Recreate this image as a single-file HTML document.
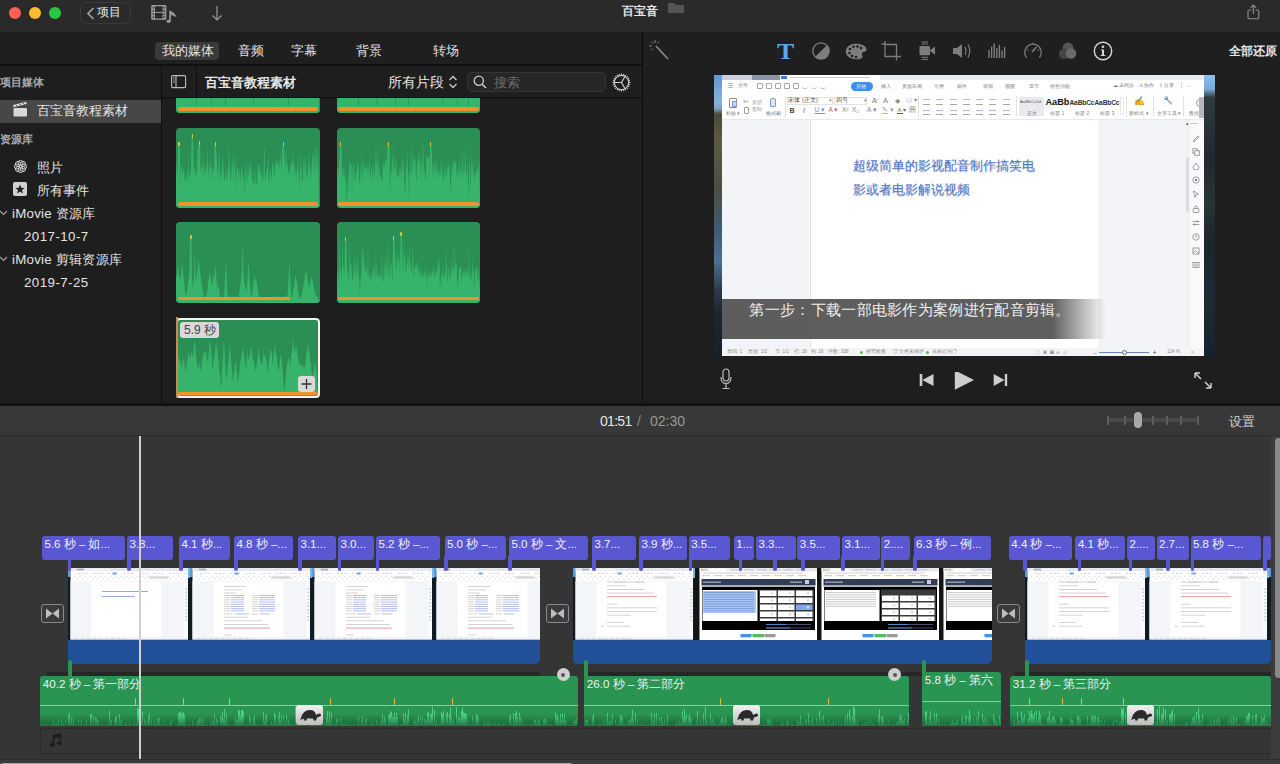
<!DOCTYPE html><html><head><meta charset="utf-8"><style>

*{margin:0;padding:0;box-sizing:border-box}
html,body{width:1280px;height:764px;overflow:hidden;background:#1e1e1e;font-family:"Liberation Sans",sans-serif;color:#ddd}
.ab{position:absolute}
.t{position:absolute;white-space:nowrap;line-height:1}

</style></head><body>
<div class="ab" style="left:0;top:0;width:1280px;height:32px;background:#2a2a2a"></div>
<div class="ab" style="left:9px;top:7px;width:12px;height:12px;border-radius:6px;background:#fe5f57"></div>
<div class="ab" style="left:29px;top:7px;width:12px;height:12px;border-radius:6px;background:#febc2e"></div>
<div class="ab" style="left:49px;top:7px;width:12px;height:12px;border-radius:6px;background:#28c840"></div>
<div class="ab" style="left:80px;top:2px;width:51px;height:22px;border:1px solid #3a3a3a;border-radius:6px"></div>
<svg class="ab" style="left:86px;top:7px" width="10" height="13"><path d="M7.5 1 L2 6.5 L7.5 12" stroke="#aaa" stroke-width="1.6" fill="none"/></svg>
<div class="t" style="left:97px;top:6px;font-size:12px;color:#e6e6e6">项目</div>
<svg class="ab" style="left:151px;top:5px" width="26" height="18" viewBox="0 0 26 18">
<rect x="0.8" y="0.6" width="14" height="13.6" rx="0.8" fill="none" stroke="#9a9a9a" stroke-width="1.2"/>
<rect x="0.8" y="0.6" width="3.2" height="13.6" fill="#9a9a9a"/><rect x="11.6" y="0.6" width="3.2" height="13.6" fill="#9a9a9a"/>
<g fill="#2a2a2a"><rect x="1.7" y="2" width="1.4" height="1.4"/><rect x="1.7" y="5.2" width="1.4" height="1.4"/><rect x="1.7" y="8.4" width="1.4" height="1.4"/><rect x="1.7" y="11.4" width="1.4" height="1.4"/>
<rect x="12.5" y="2" width="1.4" height="1.4"/><rect x="12.5" y="5.2" width="1.4" height="1.4"/><rect x="12.5" y="8.4" width="1.4" height="1.4"/><rect x="12.5" y="11.4" width="1.4" height="1.4"/></g>
<line x1="4" y1="7.4" x2="11.6" y2="7.4" stroke="#9a9a9a" stroke-width="1"/>
<path d="M19 16 V6.5 Q22.5 7.5 24 10.5 Q22 9.5 20.2 9.6" stroke="#9a9a9a" stroke-width="1.5" fill="#9a9a9a"/><ellipse cx="17.6" cy="16.3" rx="2.1" ry="1.6" fill="#9a9a9a"/>
</svg>
<svg class="ab" style="left:211px;top:5px" width="12" height="17"><path d="M6 1 V15 M1.5 10.5 L6 15 L10.5 10.5" stroke="#999" stroke-width="1.2" fill="none"/></svg>
<div class="t" style="left:622px;top:5px;font-size:12px;color:#e8e8e8;font-weight:bold">百宝音</div>
<svg class="ab" style="left:668px;top:2px" width="18" height="12"><path d="M0 1 H6 L8 3 H16 V11 H0Z" fill="#555"/></svg>
<svg class="ab" style="left:1246.5px;top:4px" width="14" height="16"><path d="M6.4 1.2 V10 M3.6 3.8 L6.4 1 L9.2 3.8" stroke="#8e8e8e" stroke-width="1.1" fill="none"/><path d="M4.2 6 H2.4 Q1 6 1 7.4 V13.4 Q1 14.8 2.4 14.8 H10.4 Q11.8 14.8 11.8 13.4 V7.4 Q11.8 6 10.4 6 H8.6" stroke="#8e8e8e" stroke-width="1.1" fill="none"/></svg>
<div class="ab" style="left:0;top:32px;width:1280px;height:34px;background:#1f1f1f"></div>
<div class="ab" style="left:155px;top:42px;width:64px;height:18px;border-radius:4px;background:#3a3a3a"></div>
<div class="t" style="left:162px;top:45px;font-size:12.5px;color:#e0e0e0">我的媒体</div>
<div class="t" style="left:238px;top:45px;font-size:12.5px;color:#e0e0e0">音频</div>
<div class="t" style="left:291px;top:45px;font-size:12.5px;color:#e0e0e0">字幕</div>
<div class="t" style="left:356px;top:45px;font-size:12.5px;color:#e0e0e0">背景</div>
<div class="t" style="left:433px;top:45px;font-size:12.5px;color:#e0e0e0">转场</div>
<div class="ab" style="left:0;top:64px;width:642px;height:2px;background:#111"></div>
<div class="ab" style="left:642px;top:32px;width:1px;height:372px;background:#0c0c0c"></div>
<svg class="ab" style="left:646px;top:38px" width="60" height="24" viewBox="0 0 60 24">
<line x1="10" y1="8" x2="22" y2="21" stroke="#888" stroke-width="1.8"/>
<g stroke="#888" stroke-width="1"><line x1="9" y1="2" x2="9" y2="5"/><line x1="3" y1="8" x2="6" y2="8"/><line x1="5" y1="3.5" x2="7" y2="5.5"/><line x1="13" y1="3.5" x2="11" y2="5.5"/><line x1="5" y1="12.5" x2="7" y2="10.5"/></g>
</svg>
<div class="t" style="left:777px;top:39.5px;font-size:23px;font-family:'Liberation Serif',serif;color:#5aa9f0;font-weight:bold;transform:scaleX(1.12);transform-origin:left">T</div>
<svg class="ab" style="left:810px;top:40px" width="22" height="22"><circle cx="11" cy="11" r="8.2" stroke="#7d7d7d" stroke-width="1.3" fill="none"/><path d="M16.8 5.2 A8.2 8.2 0 0 1 5.2 16.8 Z" fill="#7d7d7d"/></svg>
<svg class="ab" style="left:845px;top:43px" width="23" height="17" viewBox="0 0 23 17"><path d="M11 0.8 C17 0.8 22 3.5 21.5 7 C21 9 18 8.5 17 10 C16 12 19 13 17 15 C15 16.5 12 16.5 9 16 C3 15 0.5 11.5 0.8 8 C1 3.5 6 0.8 11 0.8Z" fill="#7d7d7d"/>
<g fill="#1f1f1f"><circle cx="5" cy="6" r="1.3"/><circle cx="8.5" cy="3.8" r="1.3"/><circle cx="12.5" cy="3.5" r="1.3"/><circle cx="16" cy="5" r="1.3"/><circle cx="4.5" cy="10" r="1.3"/><circle cx="7" cy="13" r="1.3"/><circle cx="11" cy="14" r="1.3"/></g></svg>
<svg class="ab" style="left:881px;top:41px" width="21" height="20"><path d="M0.5 3 H4 M4 0 V15.5 H17 M4 3.5 H15.5 V19.5 M15.5 15.5 H20" stroke="#7d7d7d" stroke-width="1.3" fill="none"/></svg>
<svg class="ab" style="left:918px;top:40px" width="18" height="21"><rect x="1.5" y="6" width="10.5" height="9.3" rx="1.2" fill="#7d7d7d"/><path d="M11.5 10.6 L17 6.5 V14.7 Z" fill="#7d7d7d"/><g stroke="#7d7d7d" stroke-width="1"><line x1="3.5" y1="2" x2="10" y2="2"/><line x1="3.5" y1="4" x2="10" y2="4"/><line x1="3.5" y1="17.3" x2="10" y2="17.3"/><line x1="3.5" y1="19.4" x2="10" y2="19.4"/></g></svg>
<svg class="ab" style="left:952px;top:43px" width="20" height="16"><path d="M1 5 H5 L10 1 V15 L5 11 H1Z" fill="#7d7d7d"/><path d="M13 4 Q15 8 13 12 M16 1.5 Q19.5 8 16 14.5" stroke="#7d7d7d" stroke-width="1.2" fill="none"/></svg>
<svg class="ab" style="left:988px;top:43px" width="18" height="15"><g stroke="#7d7d7d" stroke-width="1.4"><line x1="1.0" y1="7" x2="1.0" y2="15"/><line x1="3.6" y1="3.5" x2="3.6" y2="15"/><line x1="6.2" y1="0.5" x2="6.2" y2="15"/><line x1="8.8" y1="5" x2="8.8" y2="15"/><line x1="11.4" y1="2" x2="11.4" y2="15"/><line x1="14.0" y1="7.5" x2="14.0" y2="15"/><line x1="16.6" y1="4" x2="16.6" y2="15"/></g></svg>
<svg class="ab" style="left:1023px;top:41px" width="20" height="18"><path d="M3.5 16.5 A8.3 8.3 0 1 1 16.5 16.5" stroke="#7d7d7d" stroke-width="1.3" fill="none"/><line x1="9" y1="11" x2="13.5" y2="6" stroke="#7d7d7d" stroke-width="1.6"/><g stroke="#7d7d7d" stroke-width="1"><line x1="10" y1="1.5" x2="10" y2="3.5"/><line x1="3.5" y1="9" x2="5.5" y2="9"/><line x1="14.5" y1="9" x2="16.5" y2="9"/></g></svg>
<svg class="ab" style="left:1058px;top:42px" width="20" height="18"><circle cx="10" cy="5.8" r="5.3" fill="#575757"/><circle cx="6.2" cy="11.8" r="5.3" fill="#444"/><circle cx="13" cy="11.5" r="5.3" fill="#6a6a6a"/></svg>
<svg class="ab" style="left:1093px;top:41px" width="20" height="20"><circle cx="10" cy="10" r="8.7" stroke="#d8d8d8" stroke-width="1.4" fill="none"/><circle cx="10" cy="5.7" r="1.3" fill="#d8d8d8"/><path d="M8 8.5 H11 V14 H12.3 V15 H7.7 V14 H9 V9.5 H8Z" fill="#d8d8d8"/></svg>
<div class="t" style="left:1229px;top:45.5px;font-size:11.5px;color:#e8e8e8;font-weight:bold">全部还原</div>
<div class="ab" style="left:161px;top:66px;width:1px;height:338px;background:#0e0e0e"></div>
<div class="t" style="left:0px;top:77px;font-size:11.3px;color:#a8a8a8;font-weight:bold">项目媒体</div>
<div class="ab" style="left:0;top:100px;width:161px;height:23px;background:#474747"></div>
<svg class="ab" style="left:13px;top:102px" width="15" height="15"><rect x="0.5" y="6" width="13.5" height="8.5" rx="1.2" fill="#d8d8d8"/><path d="M0.7 5.3 L13.8 2 L13 -0.2 L0 3Z" fill="#d8d8d8"/><g stroke="#474747" stroke-width="1"><line x1="3" y1="2.8" x2="4.5" y2="4.5"/><line x1="6.5" y1="1.9" x2="8" y2="3.6"/><line x1="10" y1="1" x2="11.5" y2="2.7"/></g></svg>
<div class="t" style="left:37px;top:104px;font-size:13.3px;color:#e4e4e4">百宝音教程素材</div>
<div class="t" style="left:0px;top:133.5px;font-size:11.3px;color:#a8a8a8;font-weight:bold">资源库</div>
<svg class="ab" style="left:13px;top:159px" width="15" height="15"><g fill="none" stroke="#d0d0d0" stroke-width="1"><ellipse cx="11.10" cy="7.50" rx="2.5" ry="2.5"/><ellipse cx="10.05" cy="10.05" rx="2.5" ry="2.5"/><ellipse cx="7.50" cy="11.10" rx="2.5" ry="2.5"/><ellipse cx="4.95" cy="10.05" rx="2.5" ry="2.5"/><ellipse cx="3.90" cy="7.50" rx="2.5" ry="2.5"/><ellipse cx="4.95" cy="4.95" rx="2.5" ry="2.5"/><ellipse cx="7.50" cy="3.90" rx="2.5" ry="2.5"/><ellipse cx="10.05" cy="4.95" rx="2.5" ry="2.5"/></g></svg>
<div class="t" style="left:37px;top:161px;font-size:13.3px;color:#e4e4e4">照片</div>
<svg class="ab" style="left:13px;top:182px" width="15" height="15"><rect x="0" y="0" width="14" height="14" rx="2" fill="#d0d0d0"/><path d="M7 2.5 L8.3 5.8 L11.8 5.9 L9 8 L10 11.5 L7 9.5 L4 11.5 L5 8 L2.2 5.9 L5.7 5.8Z" fill="#1e1e1e"/></svg>
<div class="t" style="left:37px;top:184px;font-size:13.3px;color:#e4e4e4">所有事件</div>
<svg class="ab" style="left:-1.5px;top:209px" width="9" height="8"><path d="M1 2 L4.5 5.5 L8 2" stroke="#aaa" stroke-width="1.1" fill="none"/></svg>
<div class="t" style="left:12px;top:207px;font-size:13.3px;color:#e4e4e4;letter-spacing:0.25px">iMovie 资源库</div>
<div class="t" style="left:24px;top:230px;font-size:13.3px;color:#e4e4e4;letter-spacing:0.45px">2017-10-7</div>
<svg class="ab" style="left:-1.5px;top:255px" width="9" height="8"><path d="M1 2 L4.5 5.5 L8 2" stroke="#aaa" stroke-width="1.1" fill="none"/></svg>
<div class="t" style="left:12px;top:253px;font-size:13.3px;color:#e4e4e4;letter-spacing:0.25px">iMovie 剪辑资源库</div>
<div class="t" style="left:24px;top:276px;font-size:13.3px;color:#e4e4e4;letter-spacing:0.45px">2019-7-25</div>
<div class="ab" style="left:162px;top:97px;width:480px;height:1px;background:#0e0e0e"></div>
<div class="ab" style="left:196px;top:66px;width:1px;height:31px;background:#0e0e0e"></div>
<svg class="ab" style="left:171px;top:75px" width="16" height="14"><rect x="0.6" y="0.6" width="14" height="12" rx="1" fill="none" stroke="#bbb" stroke-width="1.1"/><line x1="5" y1="0.6" x2="5" y2="12.6" stroke="#bbb" stroke-width="1.1"/><g stroke="#bbb" stroke-width="0.8"><line x1="1.8" y1="3" x2="4" y2="3"/><line x1="1.8" y1="5" x2="4" y2="5"/><line x1="1.8" y1="7" x2="4" y2="7"/></g></svg>
<div class="t" style="left:205px;top:76px;font-size:13px;color:#e6e6e6;font-weight:bold">百宝音教程素材</div>
<div class="t" style="left:388px;top:76px;font-size:13.5px;color:#e6e6e6">所有片段</div>
<svg class="ab" style="left:448px;top:75px" width="10" height="14"><path d="M1.5 5 L5 1.5 L8.5 5 M1.5 9 L5 12.5 L8.5 9" stroke="#ccc" stroke-width="1.3" fill="none"/></svg>
<div class="ab" style="left:467px;top:72px;width:139px;height:20px;border-radius:5px;background:#262626;border:1px solid #353535"></div>
<svg class="ab" style="left:473px;top:75px" width="14" height="14"><circle cx="5.8" cy="5.8" r="4.6" stroke="#ccc" stroke-width="1.3" fill="none"/><line x1="9.2" y1="9.2" x2="13" y2="13" stroke="#ccc" stroke-width="1.5"/></svg>
<div class="t" style="left:494px;top:76px;font-size:13px;color:#6e6e6e">搜索</div>
<svg class="ab" style="left:612px;top:73px" width="19" height="19" viewBox="0 0 19 19"><circle cx="9.5" cy="9.5" r="7.2" stroke="#ccc" stroke-width="1.2" fill="none"/><line x1="16.70" y1="9.50" x2="18.50" y2="9.50" stroke="#ccc" stroke-width="1"/><line x1="16.45" y1="11.36" x2="18.19" y2="11.83" stroke="#ccc" stroke-width="1"/><line x1="15.74" y1="13.10" x2="17.29" y2="14.00" stroke="#ccc" stroke-width="1"/><line x1="14.59" y1="14.59" x2="15.86" y2="15.86" stroke="#ccc" stroke-width="1"/><line x1="13.10" y1="15.74" x2="14.00" y2="17.29" stroke="#ccc" stroke-width="1"/><line x1="11.36" y1="16.45" x2="11.83" y2="18.19" stroke="#ccc" stroke-width="1"/><line x1="9.50" y1="16.70" x2="9.50" y2="18.50" stroke="#ccc" stroke-width="1"/><line x1="7.64" y1="16.45" x2="7.17" y2="18.19" stroke="#ccc" stroke-width="1"/><line x1="5.90" y1="15.74" x2="5.00" y2="17.29" stroke="#ccc" stroke-width="1"/><line x1="4.41" y1="14.59" x2="3.14" y2="15.86" stroke="#ccc" stroke-width="1"/><line x1="3.26" y1="13.10" x2="1.71" y2="14.00" stroke="#ccc" stroke-width="1"/><line x1="2.55" y1="11.36" x2="0.81" y2="11.83" stroke="#ccc" stroke-width="1"/><line x1="2.30" y1="9.50" x2="0.50" y2="9.50" stroke="#ccc" stroke-width="1"/><line x1="2.55" y1="7.64" x2="0.81" y2="7.17" stroke="#ccc" stroke-width="1"/><line x1="3.26" y1="5.90" x2="1.71" y2="5.00" stroke="#ccc" stroke-width="1"/><line x1="4.41" y1="4.41" x2="3.14" y2="3.14" stroke="#ccc" stroke-width="1"/><line x1="5.90" y1="3.26" x2="5.00" y2="1.71" stroke="#ccc" stroke-width="1"/><line x1="7.64" y1="2.55" x2="7.17" y2="0.81" stroke="#ccc" stroke-width="1"/><line x1="9.50" y1="2.30" x2="9.50" y2="0.50" stroke="#ccc" stroke-width="1"/><line x1="11.36" y1="2.55" x2="11.83" y2="0.81" stroke="#ccc" stroke-width="1"/><line x1="13.10" y1="3.26" x2="14.00" y2="1.71" stroke="#ccc" stroke-width="1"/><line x1="14.59" y1="4.41" x2="15.86" y2="3.14" stroke="#ccc" stroke-width="1"/><line x1="15.74" y1="5.90" x2="17.29" y2="5.00" stroke="#ccc" stroke-width="1"/><line x1="16.45" y1="7.64" x2="18.19" y2="7.17" stroke="#ccc" stroke-width="1"/><path d="M9.5 9.5 L2.5 9.5 M9.5 9.5 L13 3.5 M9.5 9.5 L13 15.5" stroke="#ccc" stroke-width="1.2"/></svg>
<div class="ab" style="left:162px;top:98px;width:480px;height:305px;overflow:hidden">
<div class="ab" style="left:14.1px;top:-65px;width:143.6px;height:80.4px;border-radius:4px;background:#2b8f55;overflow:hidden"><svg class="ab" style="left:0;top:8px" width="143.6" height="70.4"><path d="M0 70.4 L0.0 24.2 L0.5 32.0 L1.0 37.4 L1.5 19.4 L2.0 24.5 L2.5 20.9 L3.0 20.1 L3.5 19.4 L4.0 43.2 L4.5 18.7 L5.0 20.2 L5.5 5.8 L6.0 20.8 L6.5 32.0 L7.0 37.5 L7.5 31.4 L8.0 23.3 L8.5 38.2 L9.0 43.4 L9.5 30.1 L10.0 17.7 L10.5 32.8 L11.0 29.3 L11.5 41.3 L12.0 56.6 L12.5 18.3 L13.0 16.9 L13.5 23.9 L14.0 18.5 L14.5 15.1 L15.0 24.3 L15.5 58.8 L16.0 24.1 L16.5 64.9 L17.0 33.5 L17.5 40.2 L18.0 28.1 L18.5 6.8 L19.0 27.7 L19.5 14.8 L20.0 65.0 L20.5 8.0 L21.0 36.9 L21.5 33.7 L22.0 53.0 L22.5 34.1 L23.0 15.7 L23.5 5.5 L24.0 32.7 L24.5 29.2 L25.0 30.4 L25.5 33.5 L26.0 34.8 L26.5 20.0 L27.0 35.8 L27.5 32.6 L28.0 13.8 L28.5 20.9 L29.0 10.1 L29.5 36.8 L30.0 16.9 L30.5 32.1 L31.0 8.5 L31.5 40.4 L32.0 28.0 L32.5 29.0 L33.0 19.2 L33.5 38.2 L34.0 41.3 L34.5 29.8 L35.0 36.5 L35.5 18.0 L36.0 41.2 L36.5 35.4 L37.0 18.4 L37.5 37.3 L38.0 60.2 L38.5 34.1 L39.0 6.1 L39.5 16.0 L40.0 43.2 L40.5 23.2 L41.0 22.6 L41.5 36.7 L42.0 39.5 L42.5 20.5 L43.0 42.3 L43.5 33.5 L44.0 33.4 L44.5 42.0 L45.0 41.2 L45.5 54.2 L46.0 16.6 L46.5 28.7 L47.0 34.5 L47.5 13.4 L48.0 12.1 L48.5 41.8 L49.0 44.9 L49.5 31.3 L50.0 23.9 L50.5 14.8 L51.0 31.3 L51.5 19.1 L52.0 30.7 L52.5 33.3 L53.0 18.1 L53.5 41.0 L54.0 42.2 L54.5 41.4 L55.0 19.0 L55.5 34.9 L56.0 24.1 L56.5 37.9 L57.0 15.0 L57.5 40.1 L58.0 17.4 L58.5 10.8 L59.0 42.1 L59.5 43.6 L60.0 39.3 L60.5 13.0 L61.0 27.0 L61.5 16.4 L62.0 18.3 L62.5 26.1 L63.0 27.1 L63.5 23.9 L64.0 8.4 L64.5 3.2 L65.0 33.1 L65.5 41.1 L66.0 34.4 L66.5 43.3 L67.0 17.1 L67.5 39.3 L68.0 24.8 L68.5 30.5 L69.0 27.2 L69.5 30.3 L70.0 24.0 L70.5 27.8 L71.0 57.7 L71.5 54.2 L72.0 16.8 L72.5 19.5 L73.0 38.4 L73.5 20.5 L74.0 2.7 L74.5 15.0 L75.0 25.1 L75.5 18.4 L76.0 21.4 L76.5 40.7 L77.0 14.6 L77.5 41.1 L78.0 42.9 L78.5 42.7 L79.0 9.3 L79.5 42.4 L80.0 12.9 L80.5 16.9 L81.0 24.6 L81.5 45.7 L82.0 29.1 L82.5 44.0 L83.0 42.6 L83.5 32.9 L84.0 17.3 L84.5 59.3 L85.0 21.3 L85.5 37.3 L86.0 37.5 L86.5 16.8 L87.0 35.7 L87.5 43.1 L88.0 44.5 L88.5 11.9 L89.0 26.6 L89.5 39.6 L90.0 24.2 L90.5 27.1 L91.0 35.6 L91.5 40.0 L92.0 42.2 L92.5 31.9 L93.0 27.0 L93.5 39.5 L94.0 32.3 L94.5 33.9 L95.0 40.1 L95.5 54.6 L96.0 40.8 L96.5 64.4 L97.0 27.5 L97.5 47.0 L98.0 39.1 L98.5 24.2 L99.0 41.1 L99.5 32.0 L100.0 32.1 L100.5 27.2 L101.0 31.8 L101.5 37.9 L102.0 31.2 L102.5 38.0 L103.0 40.1 L103.5 41.5 L104.0 14.2 L104.5 49.1 L105.0 28.5 L105.5 23.4 L106.0 23.9 L106.5 30.3 L107.0 61.1 L107.5 44.6 L108.0 36.7 L108.5 54.2 L109.0 26.7 L109.5 36.8 L110.0 22.6 L110.5 38.6 L111.0 10.0 L111.5 34.8 L112.0 36.8 L112.5 39.9 L113.0 35.4 L113.5 22.9 L114.0 34.7 L114.5 18.6 L115.0 32.4 L115.5 30.9 L116.0 24.9 L116.5 46.6 L117.0 40.3 L117.5 15.3 L118.0 36.2 L118.5 33.2 L119.0 29.2 L119.5 3.7 L120.0 39.7 L120.5 31.3 L121.0 66.8 L121.5 40.2 L122.0 48.5 L122.5 21.0 L123.0 46.9 L123.5 41.1 L124.0 41.9 L124.5 42.2 L125.0 35.9 L125.5 47.0 L126.0 32.9 L126.5 33.1 L127.0 37.8 L127.5 56.9 L128.0 34.6 L128.5 45.1 L129.0 38.3 L129.5 35.7 L130.0 31.3 L130.5 23.6 L131.0 27.3 L131.5 32.4 L132.0 36.3 L132.5 33.2 L133.0 41.7 L133.5 55.4 L134.0 41.2 L134.5 45.5 L135.0 38.5 L135.5 42.9 L136.0 36.3 L136.5 30.9 L137.0 49.8 L137.5 41.5 L138.0 33.0 L138.5 41.6 L139.0 30.5 L139.5 24.2 L140.0 24.7 L140.5 39.1 L141.0 39.5 L141.5 42.8 L142.0 41.0 L142.5 37.9 L143 70.4 Z" fill="#36b46c"/></svg><div class="ab" style="left:0;top:77.4px;width:143.6px;height:3px;background:#36b46c"></div><div class="ab" style="left:1.5px;top:74.4px;width:140.6px;height:3.3px;border-radius:2px;background:#f3912c"></div></div>
<div class="ab" style="left:174.6px;top:-65px;width:143.6px;height:80.4px;border-radius:4px;background:#2b8f55;overflow:hidden"><svg class="ab" style="left:0;top:8px" width="143.6" height="70.4"><path d="M0 70.4 L0.0 23.9 L0.5 34.3 L1.0 67.8 L1.5 34.9 L2.0 35.7 L2.5 22.9 L3.0 48.5 L3.5 38.2 L4.0 47.8 L4.5 35.5 L5.0 43.4 L5.5 48.8 L6.0 32.8 L6.5 63.1 L7.0 28.9 L7.5 25.9 L8.0 33.0 L8.5 34.3 L9.0 42.4 L9.5 44.4 L10.0 30.7 L10.5 35.2 L11.0 38.2 L11.5 48.3 L12.0 32.9 L12.5 36.2 L13.0 34.5 L13.5 35.9 L14.0 37.1 L14.5 6.6 L15.0 24.7 L15.5 33.8 L16.0 46.6 L16.5 42.5 L17.0 38.2 L17.5 30.8 L18.0 47.3 L18.5 32.9 L19.0 26.3 L19.5 25.9 L20.0 7.2 L20.5 46.7 L21.0 48.0 L21.5 45.4 L22.0 37.7 L22.5 48.8 L23.0 54.4 L23.5 44.2 L24.0 19.8 L24.5 44.4 L25.0 33.7 L25.5 25.4 L26.0 30.4 L26.5 39.1 L27.0 40.7 L27.5 39.7 L28.0 23.1 L28.5 4.5 L29.0 28.0 L29.5 44.6 L30.0 29.4 L30.5 39.3 L31.0 36.6 L31.5 31.4 L32.0 40.4 L32.5 47.8 L33.0 22.2 L33.5 43.2 L34.0 23.0 L34.5 28.6 L35.0 40.1 L35.5 42.8 L36.0 27.2 L36.5 37.1 L37.0 23.8 L37.5 59.8 L38.0 4.5 L38.5 23.8 L39.0 24.8 L39.5 64.2 L40.0 29.7 L40.5 38.3 L41.0 45.5 L41.5 43.2 L42.0 40.5 L42.5 44.1 L43.0 54.2 L43.5 21.4 L44.0 41.5 L44.5 22.5 L45.0 40.1 L45.5 3.8 L46.0 65.0 L46.5 19.7 L47.0 28.1 L47.5 38.2 L48.0 39.8 L48.5 29.6 L49.0 35.8 L49.5 38.3 L50.0 37.9 L50.5 29.7 L51.0 46.4 L51.5 18.6 L52.0 39.3 L52.5 23.3 L53.0 3.0 L53.5 26.7 L54.0 60.3 L54.5 38.3 L55.0 13.8 L55.5 23.5 L56.0 24.1 L56.5 34.2 L57.0 26.7 L57.5 19.6 L58.0 31.5 L58.5 35.8 L59.0 46.7 L59.5 13.4 L60.0 44.7 L60.5 36.5 L61.0 10.3 L61.5 29.2 L62.0 26.4 L62.5 33.5 L63.0 31.5 L63.5 38.6 L64.0 45.3 L64.5 42.1 L65.0 36.9 L65.5 34.3 L66.0 26.9 L66.5 14.3 L67.0 37.3 L67.5 5.9 L68.0 33.7 L68.5 2.3 L69.0 24.9 L69.5 56.3 L70.0 21.8 L70.5 13.3 L71.0 17.6 L71.5 54.2 L72.0 39.7 L72.5 39.9 L73.0 10.1 L73.5 43.5 L74.0 17.1 L74.5 27.1 L75.0 36.2 L75.5 17.5 L76.0 27.7 L76.5 24.4 L77.0 40.1 L77.5 20.3 L78.0 18.5 L78.5 28.0 L79.0 28.4 L79.5 44.3 L80.0 34.7 L80.5 21.9 L81.0 31.4 L81.5 35.7 L82.0 17.0 L82.5 27.8 L83.0 18.6 L83.5 38.0 L84.0 7.4 L84.5 30.4 L85.0 19.5 L85.5 26.7 L86.0 21.6 L86.5 22.5 L87.0 17.1 L87.5 16.0 L88.0 34.7 L88.5 25.0 L89.0 27.0 L89.5 27.3 L90.0 32.5 L90.5 28.9 L91.0 31.7 L91.5 37.6 L92.0 3.6 L92.5 31.6 L93.0 37.7 L93.5 16.0 L94.0 35.4 L94.5 17.9 L95.0 36.8 L95.5 3.0 L96.0 33.0 L96.5 17.0 L97.0 37.6 L97.5 12.9 L98.0 34.4 L98.5 39.2 L99.0 19.7 L99.5 20.1 L100.0 31.5 L100.5 6.8 L101.0 5.1 L101.5 12.3 L102.0 57.6 L102.5 32.0 L103.0 39.6 L103.5 29.6 L104.0 22.4 L104.5 16.0 L105.0 20.9 L105.5 34.0 L106.0 32.5 L106.5 39.8 L107.0 40.9 L107.5 61.1 L108.0 14.3 L108.5 43.6 L109.0 6.9 L109.5 24.0 L110.0 32.8 L110.5 23.6 L111.0 15.7 L111.5 26.4 L112.0 43.2 L112.5 39.1 L113.0 25.0 L113.5 22.5 L114.0 15.4 L114.5 17.8 L115.0 42.6 L115.5 34.1 L116.0 30.4 L116.5 35.3 L117.0 45.4 L117.5 67.8 L118.0 26.0 L118.5 25.4 L119.0 38.3 L119.5 31.7 L120.0 25.9 L120.5 44.6 L121.0 20.1 L121.5 27.1 L122.0 22.1 L122.5 36.4 L123.0 38.0 L123.5 26.4 L124.0 40.7 L124.5 29.3 L125.0 45.0 L125.5 2.5 L126.0 25.5 L126.5 26.6 L127.0 60.2 L127.5 20.1 L128.0 26.3 L128.5 27.9 L129.0 18.3 L129.5 43.0 L130.0 21.3 L130.5 17.3 L131.0 64.2 L131.5 17.2 L132.0 27.6 L132.5 45.2 L133.0 23.5 L133.5 25.9 L134.0 30.4 L134.5 13.5 L135.0 17.0 L135.5 37.5 L136.0 26.7 L136.5 15.0 L137.0 42.3 L137.5 37.5 L138.0 63.6 L138.5 18.3 L139.0 24.1 L139.5 25.1 L140.0 29.6 L140.5 33.5 L141.0 25.1 L141.5 23.2 L142.0 24.9 L142.5 13.0 L143 70.4 Z" fill="#36b46c"/></svg><div class="ab" style="left:0;top:77.4px;width:143.6px;height:3px;background:#36b46c"></div><div class="ab" style="left:1.5px;top:74.4px;width:140.6px;height:3.3px;border-radius:2px;background:#f3912c"></div></div>
<div class="ab" style="left:14.1px;top:30px;width:143.6px;height:80.4px;border-radius:4px;background:#2b8f55;overflow:hidden"><svg class="ab" style="left:0;top:8px" width="143.6" height="70.4"><path d="M0 70.4 L0.0 34.5 L0.5 24.4 L1.0 42.5 L1.5 40.3 L2.0 10.0 L2.5 10.0 L3.0 10.0 L3.5 10.0 L4.0 15.1 L4.5 53.7 L5.0 35.3 L5.5 30.3 L6.0 30.5 L6.5 41.4 L7.0 35.0 L7.5 33.6 L8.0 33.6 L8.5 45.5 L9.0 44.9 L9.5 36.8 L10.0 41.6 L10.5 46.3 L11.0 33.7 L11.5 37.2 L12.0 49.4 L12.5 14.6 L13.0 39.8 L13.5 43.2 L14.0 35.0 L14.5 37.0 L15.0 39.0 L15.5 2.0 L16.0 2.0 L16.5 2.0 L17.0 2.0 L17.5 37.9 L18.0 37.6 L18.5 27.0 L19.0 33.5 L19.5 44.6 L20.0 34.1 L20.5 37.4 L21.0 37.4 L21.5 3.8 L22.0 21.8 L22.5 9.0 L23.0 9.0 L23.5 9.0 L24.0 9.0 L24.5 35.8 L25.0 33.8 L25.5 32.4 L26.0 30.8 L26.5 32.1 L27.0 12.6 L27.5 47.0 L28.0 28.3 L28.5 30.7 L29.0 42.0 L29.5 30.3 L30.0 36.9 L30.5 30.1 L31.0 28.4 L31.5 5.0 L32.0 47.3 L32.5 27.9 L33.0 43.4 L33.5 28.4 L34.0 30.5 L34.5 35.7 L35.0 19.1 L35.5 33.4 L36.0 27.5 L36.5 47.2 L37.0 34.5 L37.5 33.9 L38.0 34.7 L38.5 10.0 L39.0 10.0 L39.5 10.0 L40.0 10.0 L40.5 21.1 L41.0 24.5 L41.5 34.5 L42.0 43.3 L42.5 30.7 L43.0 24.8 L43.5 14.0 L44.0 45.3 L44.5 36.0 L45.0 44.5 L45.5 35.6 L46.0 34.6 L46.5 23.8 L47.0 21.9 L47.5 32.6 L48.0 44.7 L48.5 45.0 L49.0 40.4 L49.5 38.0 L50.0 30.4 L50.5 43.9 L51.0 45.2 L51.5 32.1 L52.0 38.8 L52.5 26.2 L53.0 5.7 L53.5 26.7 L54.0 34.5 L54.5 45.6 L55.0 43.9 L55.5 35.2 L56.0 24.0 L56.5 31.7 L57.0 16.1 L57.5 35.3 L58.0 49.1 L58.5 11.1 L59.0 33.3 L59.5 44.4 L60.0 13.8 L60.5 57.4 L61.0 30.4 L61.5 31.3 L62.0 32.3 L62.5 33.7 L63.0 42.8 L63.5 29.5 L64.0 47.3 L64.5 45.2 L65.0 35.5 L65.5 28.9 L66.0 33.3 L66.5 40.3 L67.0 45.2 L67.5 36.2 L68.0 46.3 L68.5 61.2 L69.0 25.9 L69.5 31.1 L70.0 52.9 L70.5 37.5 L71.0 23.7 L71.5 47.3 L72.0 41.0 L72.5 38.1 L73.0 24.5 L73.5 40.0 L74.0 32.1 L74.5 25.5 L75.0 30.7 L75.5 46.2 L76.0 27.9 L76.5 46.0 L77.0 45.5 L77.5 46.6 L78.0 50.5 L78.5 31.9 L79.0 33.6 L79.5 47.3 L80.0 48.0 L80.5 47.8 L81.0 50.2 L81.5 36.2 L82.0 28.1 L82.5 30.1 L83.0 26.8 L83.5 33.4 L84.0 39.0 L84.5 38.6 L85.0 26.9 L85.5 37.3 L86.0 42.5 L86.5 46.3 L87.0 37.2 L87.5 46.8 L88.0 15.2 L88.5 10.0 L89.0 42.3 L89.5 44.2 L90.0 35.1 L90.5 38.4 L91.0 32.4 L91.5 31.9 L92.0 14.6 L92.5 41.3 L93.0 48.5 L93.5 42.2 L94.0 34.3 L94.5 31.9 L95.0 40.4 L95.5 44.5 L96.0 36.3 L96.5 25.0 L97.0 28.1 L97.5 28.0 L98.0 42.5 L98.5 41.5 L99.0 35.7 L99.5 23.2 L100.0 24.8 L100.5 26.8 L101.0 30.2 L101.5 25.2 L102.0 28.5 L102.5 25.1 L103.0 35.2 L103.5 26.3 L104.0 20.4 L104.5 29.7 L105.0 5.5 L105.5 37.2 L106.0 28.8 L106.5 10.0 L107.0 10.0 L107.5 10.0 L108.0 10.0 L108.5 27.5 L109.0 6.8 L109.5 41.4 L110.0 26.4 L110.5 10.1 L111.0 33.0 L111.5 27.3 L112.0 30.5 L112.5 37.8 L113.0 35.6 L113.5 39.2 L114.0 34.9 L114.5 31.5 L115.0 27.2 L115.5 24.3 L116.0 28.6 L116.5 27.7 L117.0 15.5 L117.5 26.4 L118.0 44.7 L118.5 21.4 L119.0 38.6 L119.5 28.3 L120.0 43.9 L120.5 34.7 L121.0 35.8 L121.5 28.9 L122.0 18.4 L122.5 40.0 L123.0 33.1 L123.5 55.1 L124.0 40.2 L124.5 8.5 L125.0 35.6 L125.5 27.0 L126.0 45.5 L126.5 44.6 L127.0 45.6 L127.5 18.8 L128.0 28.6 L128.5 36.6 L129.0 19.0 L129.5 21.3 L130.0 33.4 L130.5 44.6 L131.0 39.4 L131.5 38.9 L132.0 32.6 L132.5 27.2 L133.0 11.1 L133.5 36.6 L134.0 22.4 L134.5 45.1 L135.0 27.3 L135.5 43.7 L136.0 25.6 L136.5 19.4 L137.0 15.7 L137.5 35.6 L138.0 9.5 L138.5 41.5 L139.0 15.3 L139.5 10.2 L140.0 42.9 L140.5 3.8 L141.0 29.2 L141.5 35.7 L142.0 11.4 L142.5 20.7 L143 70.4 Z" fill="#36b46c"/></svg><div class="ab" style="left:2px;top:14px;width:1.6px;height:4px;background:#e8c535;border-radius:1px"></div><div class="ab" style="left:15.5px;top:6px;width:1.6px;height:4px;background:#e8c535;border-radius:1px"></div><div class="ab" style="left:22.5px;top:13px;width:1.6px;height:4px;background:#e8c535;border-radius:1px"></div><div class="ab" style="left:38.5px;top:14px;width:1.6px;height:4px;background:#e8c535;border-radius:1px"></div><div class="ab" style="left:106.5px;top:14px;width:1.6px;height:4px;background:#e8c535;border-radius:1px"></div><div class="ab" style="left:0;top:77.4px;width:143.6px;height:3px;background:#36b46c"></div><div class="ab" style="left:1.5px;top:74.4px;width:140.6px;height:3.3px;border-radius:2px;background:#f3912c"></div></div>
<div class="ab" style="left:174.6px;top:30px;width:143.6px;height:80.4px;border-radius:4px;background:#2b8f55;overflow:hidden"><svg class="ab" style="left:0;top:8px" width="143.6" height="70.4"><path d="M0 70.4 L0.0 31.0 L0.5 32.6 L1.0 33.3 L1.5 44.4 L2.0 25.4 L2.5 22.2 L3.0 10.0 L3.5 10.0 L4.0 10.0 L4.5 10.0 L5.0 36.4 L5.5 42.2 L6.0 26.2 L6.5 42.8 L7.0 30.0 L7.5 38.9 L8.0 48.4 L8.5 34.8 L9.0 46.0 L9.5 63.1 L10.0 64.5 L10.5 45.7 L11.0 32.6 L11.5 58.3 L12.0 38.0 L12.5 24.5 L13.0 27.3 L13.5 28.4 L14.0 26.5 L14.5 32.2 L15.0 59.3 L15.5 36.3 L16.0 27.7 L16.5 29.7 L17.0 29.0 L17.5 46.2 L18.0 45.2 L18.5 34.0 L19.0 49.1 L19.5 33.4 L20.0 35.1 L20.5 20.7 L21.0 29.6 L21.5 28.7 L22.0 44.3 L22.5 46.5 L23.0 47.5 L23.5 25.6 L24.0 35.0 L24.5 50.0 L25.0 10.6 L25.5 32.1 L26.0 47.4 L26.5 25.5 L27.0 27.6 L27.5 30.9 L28.0 37.1 L28.5 31.9 L29.0 31.9 L29.5 31.6 L30.0 28.1 L30.5 31.5 L31.0 44.7 L31.5 31.3 L32.0 29.4 L32.5 23.0 L33.0 40.9 L33.5 45.0 L34.0 37.6 L34.5 32.2 L35.0 28.8 L35.5 38.7 L36.0 45.6 L36.5 26.0 L37.0 40.3 L37.5 40.4 L38.0 31.1 L38.5 25.8 L39.0 4.6 L39.5 30.9 L40.0 21.0 L40.5 49.0 L41.0 10.6 L41.5 34.4 L42.0 25.2 L42.5 38.3 L43.0 39.4 L43.5 44.2 L44.0 37.8 L44.5 40.2 L45.0 47.2 L45.5 45.7 L46.0 24.9 L46.5 25.5 L47.0 35.4 L47.5 29.2 L48.0 28.9 L48.5 20.4 L49.0 25.5 L49.5 22.4 L50.0 35.3 L50.5 5.3 L51.0 10.0 L51.5 10.0 L52.0 10.0 L52.5 10.0 L53.0 64.9 L53.5 40.2 L54.0 33.5 L54.5 39.2 L55.0 21.8 L55.5 18.6 L56.0 40.7 L56.5 2.6 L57.0 34.9 L57.5 32.1 L58.0 31.8 L58.5 19.3 L59.0 42.7 L59.5 19.0 L60.0 40.6 L60.5 41.6 L61.0 40.6 L61.5 36.4 L62.0 42.7 L62.5 31.5 L63.0 31.7 L63.5 35.3 L64.0 42.0 L64.5 32.6 L65.0 23.0 L65.5 23.6 L66.0 38.2 L66.5 19.8 L67.0 41.7 L67.5 46.0 L68.0 62.0 L68.5 47.9 L69.0 23.3 L69.5 35.3 L70.0 30.5 L70.5 11.8 L71.0 34.8 L71.5 44.8 L72.0 67.3 L72.5 35.9 L73.0 36.2 L73.5 8.2 L74.0 43.3 L74.5 36.7 L75.0 4.2 L75.5 28.5 L76.0 36.5 L76.5 20.4 L77.0 23.2 L77.5 25.0 L78.0 21.8 L78.5 24.3 L79.0 44.1 L79.5 46.0 L80.0 27.5 L80.5 25.0 L81.0 27.5 L81.5 14.6 L82.0 21.3 L82.5 27.1 L83.0 13.6 L83.5 43.4 L84.0 29.0 L84.5 27.2 L85.0 6.6 L85.5 42.8 L86.0 30.1 L86.5 2.7 L87.0 28.6 L87.5 36.3 L88.0 36.3 L88.5 45.0 L89.0 41.5 L89.5 19.8 L90.0 18.7 L90.5 22.5 L91.0 20.7 L91.5 21.6 L92.0 20.6 L92.5 44.3 L93.0 10.0 L93.5 10.0 L94.0 10.0 L94.5 10.0 L95.0 21.1 L95.5 44.9 L96.0 30.2 L96.5 29.2 L97.0 30.3 L97.5 41.6 L98.0 18.8 L98.5 36.4 L99.0 20.3 L99.5 33.5 L100.0 35.8 L100.5 29.2 L101.0 46.4 L101.5 29.5 L102.0 42.8 L102.5 33.0 L103.0 36.1 L103.5 38.2 L104.0 22.9 L104.5 37.5 L105.0 20.3 L105.5 47.8 L106.0 31.7 L106.5 41.1 L107.0 47.4 L107.5 27.4 L108.0 38.3 L108.5 41.8 L109.0 25.8 L109.5 39.9 L110.0 39.6 L110.5 28.9 L111.0 34.0 L111.5 24.8 L112.0 35.8 L112.5 23.9 L113.0 46.9 L113.5 56.9 L114.0 45.2 L114.5 27.7 L115.0 42.6 L115.5 27.9 L116.0 23.0 L116.5 34.5 L117.0 23.8 L117.5 29.5 L118.0 23.9 L118.5 28.1 L119.0 22.7 L119.5 42.2 L120.0 34.3 L120.5 33.6 L121.0 43.6 L121.5 26.7 L122.0 44.7 L122.5 15.4 L123.0 40.6 L123.5 29.2 L124.0 39.0 L124.5 37.6 L125.0 31.9 L125.5 17.7 L126.0 16.3 L126.5 44.4 L127.0 33.7 L127.5 37.0 L128.0 8.5 L128.5 20.9 L129.0 40.3 L129.5 37.5 L130.0 26.0 L130.5 29.7 L131.0 45.3 L131.5 64.1 L132.0 41.4 L132.5 14.3 L133.0 34.2 L133.5 55.5 L134.0 27.4 L134.5 19.4 L135.0 43.1 L135.5 23.6 L136.0 41.9 L136.5 15.4 L137.0 44.6 L137.5 37.2 L138.0 44.4 L138.5 37.6 L139.0 32.7 L139.5 34.4 L140.0 36.5 L140.5 33.7 L141.0 20.9 L141.5 40.6 L142.0 22.6 L142.5 32.2 L143 70.4 Z" fill="#36b46c"/></svg><div class="ab" style="left:3px;top:14px;width:1.6px;height:4px;background:#e8c535;border-radius:1px"></div><div class="ab" style="left:51px;top:14px;width:1.6px;height:4px;background:#e8c535;border-radius:1px"></div><div class="ab" style="left:93px;top:14px;width:1.6px;height:4px;background:#e8c535;border-radius:1px"></div><div class="ab" style="left:0;top:77.4px;width:143.6px;height:3px;background:#36b46c"></div><div class="ab" style="left:1.5px;top:74.4px;width:140.6px;height:3.3px;border-radius:2px;background:#f3912c"></div></div>
<div class="ab" style="left:14.1px;top:124.2px;width:143.6px;height:80.4px;border-radius:4px;background:#2b8f55;overflow:hidden"><svg class="ab" style="left:0;top:8px" width="143.6" height="70.4"><path d="M0 70.4 L0.0 46.2 L0.5 47.8 L1.0 45.3 L1.5 39.9 L2.0 34.8 L2.5 40.4 L3.0 45.7 L3.5 45.0 L4.0 48.6 L4.5 50.0 L5.0 45.2 L5.5 40.3 L6.0 35.1 L6.5 36.0 L7.0 41.1 L7.5 46.0 L8.0 50.7 L8.5 55.2 L9.0 59.4 L9.5 63.2 L10.0 66.4 L10.5 63.6 L11.0 60.5 L11.5 57.1 L12.0 53.5 L12.5 49.8 L13.0 45.9 L13.5 41.8 L14.0 9.0 L14.5 9.0 L15.0 9.0 L15.5 9.0 L16.0 58.2 L16.5 55.9 L17.0 47.0 L17.5 54.9 L18.0 48.3 L18.5 26.5 L19.0 23.2 L19.5 45.5 L20.0 51.4 L20.5 47.5 L21.0 43.4 L21.5 39.1 L22.0 34.8 L22.5 30.2 L23.0 32.4 L23.5 36.9 L24.0 41.2 L24.5 45.4 L25.0 49.4 L25.5 53.3 L26.0 54.4 L26.5 58.2 L27.0 61.8 L27.5 65.1 L28.0 67.9 L28.5 69.7 L29.0 67.0 L29.5 67.5 L30.0 67.6 L30.5 64.8 L31.0 62.4 L31.5 59.4 L32.0 56.3 L32.5 47.8 L33.0 49.2 L33.5 45.7 L34.0 42.0 L34.5 45.8 L35.0 49.5 L35.5 53.0 L36.0 56.4 L36.5 54.7 L37.0 48.8 L37.5 42.4 L38.0 46.6 L38.5 49.2 L39.0 42.1 L39.5 34.6 L40.0 41.6 L40.5 48.7 L41.0 55.3 L41.5 60.9 L42.0 55.1 L42.5 53.1 L43.0 59.1 L43.5 64.4 L44.0 68.7 L44.5 70.3 L45.0 66.6 L45.5 67.4 L46.0 69.6 L46.5 68.6 L47.0 69.7 L47.5 68.9 L48.0 67.2 L48.5 59.0 L49.0 48.9 L49.5 37.6 L50.0 32.1 L50.5 43.9 L51.0 54.5 L51.5 63.7 L52.0 67.9 L52.5 70.4 L53.0 69.3 L53.5 66.8 L54.0 68.1 L54.5 65.6 L55.0 65.3 L55.5 68.7 L56.0 68.3 L56.5 68.7 L57.0 66.6 L57.5 69.8 L58.0 68.8 L58.5 65.5 L59.0 68.3 L59.5 64.9 L60.0 68.2 L60.5 65.7 L61.0 67.8 L61.5 69.8 L62.0 67.1 L62.5 67.4 L63.0 64.5 L63.5 61.3 L64.0 57.7 L64.5 53.9 L65.0 49.9 L65.5 45.7 L66.0 41.1 L66.5 15.9 L67.0 22.1 L67.5 46.4 L68.0 50.8 L68.5 53.2 L69.0 55.6 L69.5 57.9 L70.0 60.0 L70.5 62.1 L71.0 56.2 L71.5 48.6 L72.0 40.2 L72.5 31.3 L73.0 39.7 L73.5 48.1 L74.0 55.8 L74.5 62.6 L75.0 65.6 L75.5 67.8 L76.0 64.9 L76.5 61.7 L77.0 58.1 L77.5 54.3 L78.0 50.2 L78.5 46.0 L79.0 45.9 L79.5 50.2 L80.0 50.1 L80.5 50.4 L81.0 54.2 L81.5 57.8 L82.0 61.2 L82.5 64.4 L83.0 65.8 L83.5 69.5 L84.0 69.7 L84.5 69.1 L85.0 69.6 L85.5 66.0 L86.0 70.4 L86.5 66.6 L87.0 68.4 L87.5 69.6 L88.0 69.1 L88.5 67.4 L89.0 69.0 L89.5 68.2 L90.0 68.2 L90.5 67.4 L91.0 66.4 L91.5 68.8 L92.0 67.0 L92.5 66.4 L93.0 68.7 L93.5 66.1 L94.0 69.9 L94.5 67.6 L95.0 68.4 L95.5 69.7 L96.0 66.7 L96.5 65.6 L97.0 67.7 L97.5 68.4 L98.0 65.3 L98.5 64.8 L99.0 66.9 L99.5 67.2 L100.0 66.8 L100.5 66.4 L101.0 66.6 L101.5 67.4 L102.0 66.2 L102.5 66.2 L103.0 66.8 L103.5 67.4 L104.0 68.3 L104.5 69.2 L105.0 67.5 L105.5 68.7 L106.0 67.7 L106.5 69.4 L107.0 65.3 L107.5 69.7 L108.0 65.4 L108.5 67.2 L109.0 65.3 L109.5 65.4 L110.0 69.4 L110.5 68.9 L111.0 64.8 L111.5 66.4 L112.0 58.5 L112.5 48.9 L113.0 38.2 L113.5 31.6 L114.0 42.8 L114.5 53.1 L115.0 62.0 L115.5 67.7 L116.0 66.4 L116.5 64.8 L117.0 62.0 L117.5 59.0 L118.0 55.8 L118.5 52.4 L119.0 48.9 L119.5 45.2 L120.0 46.1 L120.5 49.7 L121.0 53.2 L121.5 56.5 L122.0 59.7 L122.5 62.7 L123.0 65.4 L123.5 67.8 L124.0 69.0 L124.5 67.8 L125.0 66.6 L125.5 65.2 L126.0 63.3 L126.5 60.8 L127.0 58.0 L127.5 55.1 L128.0 52.1 L128.5 49.0 L129.0 45.8 L129.5 42.4 L130.0 39.0 L130.5 41.3 L131.0 44.7 L131.5 48.0 L132.0 51.2 L132.5 54.2 L133.0 57.1 L133.5 56.6 L134.0 54.2 L134.5 51.7 L135.0 49.1 L135.5 46.5 L136.0 48.3 L136.5 50.9 L137.0 53.4 L137.5 55.8 L138.0 58.2 L138.5 60.4 L139.0 62.6 L139.5 64.6 L140.0 66.4 L140.5 65.5 L141.0 65.5 L141.5 67.2 L142.0 69.9 L142.5 69.3 L143 70.4 Z" fill="#36b46c"/></svg><div class="ab" style="left:14px;top:13px;width:1.6px;height:4px;background:#e8c535;border-radius:1px"></div><div class="ab" style="left:0;top:77.4px;width:143.6px;height:3px;background:#36b46c"></div><div class="ab" style="left:1.5px;top:74.4px;width:112px;height:3.3px;border-radius:2px;background:#f3912c"></div></div>
<div class="ab" style="left:174.6px;top:124.2px;width:143.6px;height:80.4px;border-radius:4px;background:#2b8f55;overflow:hidden"><svg class="ab" style="left:0;top:8px" width="143.6" height="70.4"><path d="M0 70.4 L0.0 36.3 L0.5 47.1 L1.0 39.6 L1.5 51.8 L2.0 50.2 L2.5 2.2 L3.0 31.9 L3.5 45.4 L4.0 33.1 L4.5 53.9 L5.0 42.5 L5.5 6.3 L6.0 38.8 L6.5 35.0 L7.0 40.7 L7.5 43.9 L8.0 11.0 L8.5 11.0 L9.0 11.0 L9.5 11.0 L10.0 44.7 L10.5 39.6 L11.0 43.1 L11.5 51.4 L12.0 47.0 L12.5 8.2 L13.0 46.3 L13.5 35.1 L14.0 33.6 L14.5 35.4 L15.0 48.8 L15.5 53.0 L16.0 44.1 L16.5 49.6 L17.0 24.2 L17.5 34.5 L18.0 49.1 L18.5 27.3 L19.0 37.2 L19.5 44.5 L20.0 46.2 L20.5 11.6 L21.0 51.9 L21.5 33.3 L22.0 43.8 L22.5 66.8 L23.0 43.1 L23.5 59.9 L24.0 41.6 L24.5 49.0 L25.0 10.4 L25.5 34.6 L26.0 9.0 L26.5 38.5 L27.0 20.2 L27.5 34.5 L28.0 41.8 L28.5 41.9 L29.0 33.7 L29.5 42.2 L30.0 37.6 L30.5 47.9 L31.0 8.4 L31.5 45.6 L32.0 43.1 L32.5 47.9 L33.0 54.3 L33.5 42.1 L34.0 46.2 L34.5 45.9 L35.0 52.6 L35.5 40.2 L36.0 41.2 L36.5 35.9 L37.0 48.2 L37.5 40.8 L38.0 22.1 L38.5 44.7 L39.0 51.3 L39.5 35.8 L40.0 32.4 L40.5 46.4 L41.0 47.5 L41.5 48.0 L42.0 40.1 L42.5 48.1 L43.0 43.1 L43.5 46.8 L44.0 47.2 L44.5 51.5 L45.0 15.4 L45.5 38.9 L46.0 52.6 L46.5 47.0 L47.0 56.0 L47.5 24.8 L48.0 40.3 L48.5 32.9 L49.0 50.9 L49.5 31.8 L50.0 7.0 L50.5 37.0 L51.0 42.9 L51.5 44.2 L52.0 13.9 L52.5 45.6 L53.0 50.1 L53.5 34.9 L54.0 29.6 L54.5 35.5 L55.0 49.6 L55.5 51.0 L56.0 10.0 L56.5 10.0 L57.0 10.0 L57.5 10.0 L58.0 36.7 L58.5 39.2 L59.0 14.9 L59.5 32.1 L60.0 43.8 L60.5 24.1 L61.0 32.1 L61.5 23.0 L62.0 37.3 L62.5 26.1 L63.0 48.1 L63.5 6.0 L64.0 6.0 L64.5 6.0 L65.0 6.0 L65.5 29.7 L66.0 42.6 L66.5 36.8 L67.0 5.9 L67.5 28.4 L68.0 22.6 L68.5 48.9 L69.0 33.7 L69.5 43.5 L70.0 15.0 L70.5 34.9 L71.0 31.7 L71.5 24.7 L72.0 41.7 L72.5 22.5 L73.0 14.3 L73.5 43.5 L74.0 29.3 L74.5 42.8 L75.0 42.1 L75.5 30.8 L76.0 8.3 L76.5 45.7 L77.0 48.1 L77.5 36.7 L78.0 37.5 L78.5 37.4 L79.0 29.9 L79.5 41.4 L80.0 31.0 L80.5 33.3 L81.0 36.9 L81.5 40.4 L82.0 48.2 L82.5 34.4 L83.0 47.7 L83.5 41.4 L84.0 35.3 L84.5 46.7 L85.0 48.4 L85.5 40.8 L86.0 46.7 L86.5 44.6 L87.0 42.6 L87.5 40.2 L88.0 50.3 L88.5 35.1 L89.0 44.5 L89.5 43.1 L90.0 63.3 L90.5 35.3 L91.0 50.0 L91.5 47.5 L92.0 42.4 L92.5 41.0 L93.0 47.5 L93.5 45.0 L94.0 41.9 L94.5 47.6 L95.0 38.1 L95.5 42.5 L96.0 44.0 L96.5 33.7 L97.0 44.9 L97.5 48.3 L98.0 35.4 L98.5 44.7 L99.0 41.9 L99.5 42.3 L100.0 45.7 L100.5 34.5 L101.0 29.9 L101.5 38.0 L102.0 26.4 L102.5 34.1 L103.0 68.2 L103.5 41.2 L104.0 60.4 L104.5 42.9 L105.0 44.3 L105.5 46.1 L106.0 31.8 L106.5 45.9 L107.0 49.1 L107.5 43.2 L108.0 44.3 L108.5 43.9 L109.0 7.5 L109.5 39.9 L110.0 32.7 L110.5 53.9 L111.0 47.3 L111.5 36.0 L112.0 36.5 L112.5 46.2 L113.0 53.3 L113.5 40.9 L114.0 46.7 L114.5 28.7 L115.0 34.0 L115.5 46.2 L116.0 31.8 L116.5 44.6 L117.0 3.4 L117.5 40.1 L118.0 36.5 L118.5 33.3 L119.0 33.6 L119.5 31.6 L120.0 45.2 L120.5 60.0 L121.0 51.4 L121.5 46.5 L122.0 39.0 L122.5 37.6 L123.0 36.0 L123.5 37.7 L124.0 37.5 L124.5 57.1 L125.0 36.4 L125.5 47.2 L126.0 37.6 L126.5 46.3 L127.0 41.8 L127.5 41.4 L128.0 47.5 L128.5 38.1 L129.0 38.6 L129.5 48.1 L130.0 41.3 L130.5 40.9 L131.0 41.8 L131.5 47.4 L132.0 12.8 L132.5 49.3 L133.0 38.5 L133.5 50.3 L134.0 53.5 L134.5 42.6 L135.0 49.1 L135.5 25.4 L136.0 40.1 L136.5 44.1 L137.0 38.8 L137.5 63.1 L138.0 45.8 L138.5 37.2 L139.0 39.9 L139.5 34.1 L140.0 47.2 L140.5 52.5 L141.0 38.2 L141.5 37.3 L142.0 52.3 L142.5 47.5 L143 70.4 Z" fill="#36b46c"/></svg><div class="ab" style="left:8px;top:15px;width:1.6px;height:4px;background:#e8c535;border-radius:1px"></div><div class="ab" style="left:56px;top:14px;width:1.6px;height:4px;background:#e8c535;border-radius:1px"></div><div class="ab" style="left:63.5px;top:10px;width:1.6px;height:4px;background:#e8c535;border-radius:1px"></div><div class="ab" style="left:0;top:77.4px;width:143.6px;height:3px;background:#36b46c"></div><div class="ab" style="left:1.5px;top:74.4px;width:140.6px;height:3.3px;border-radius:2px;background:#f3912c"></div></div>
<div class="ab" style="left:14.1px;top:219.6px;width:143.6px;height:80.4px;border-radius:4px;background:#2b8f55;overflow:hidden"><svg class="ab" style="left:0;top:8px" width="143.6" height="70.4"><path d="M0 70.4 L0.0 29.1 L0.5 36.8 L1.0 39.9 L1.5 38.0 L2.0 37.5 L2.5 33.6 L3.0 28.1 L3.5 32.7 L4.0 34.3 L4.5 37.6 L5.0 36.8 L5.5 39.9 L6.0 43.3 L6.5 33.6 L7.0 30.7 L7.5 36.0 L8.0 34.0 L8.5 39.0 L9.0 41.9 L9.5 46.5 L10.0 45.9 L10.5 38.9 L11.0 36.6 L11.5 33.4 L12.0 30.4 L12.5 23.3 L13.0 30.7 L13.5 29.4 L14.0 33.2 L14.5 30.4 L15.0 26.8 L15.5 26.8 L16.0 28.1 L16.5 29.6 L17.0 31.9 L17.5 26.3 L18.0 19.6 L18.5 14.2 L19.0 15.8 L19.5 20.0 L20.0 29.9 L20.5 32.3 L21.0 38.8 L21.5 39.6 L22.0 42.8 L22.5 44.7 L23.0 35.9 L23.5 39.4 L24.0 40.4 L24.5 45.3 L25.0 45.1 L25.5 39.4 L26.0 35.9 L26.5 32.2 L27.0 28.3 L27.5 28.2 L28.0 23.2 L28.5 27.7 L29.0 27.3 L29.5 24.9 L30.0 25.8 L30.5 28.4 L31.0 34.7 L31.5 33.1 L32.0 36.2 L32.5 28.1 L33.0 25.8 L33.5 14.6 L34.0 14.6 L34.5 18.1 L35.0 23.3 L35.5 28.7 L36.0 41.2 L36.5 44.8 L37.0 38.8 L37.5 35.2 L38.0 30.9 L38.5 32.5 L39.0 24.8 L39.5 21.0 L40.0 14.0 L40.5 18.8 L41.0 22.7 L41.5 24.4 L42.0 32.3 L42.5 31.2 L43.0 41.9 L43.5 46.5 L44.0 48.9 L44.5 54.2 L45.0 63.4 L45.5 58.3 L46.0 44.6 L46.5 34.7 L47.0 32.2 L47.5 20.6 L48.0 13.1 L48.5 23.6 L49.0 34.7 L49.5 42.6 L50.0 51.0 L50.5 55.3 L51.0 47.3 L51.5 42.1 L52.0 37.5 L52.5 32.2 L53.0 29.4 L53.5 16.6 L54.0 21.8 L54.5 25.5 L55.0 34.3 L55.5 37.0 L56.0 43.0 L56.5 52.0 L57.0 55.6 L57.5 52.1 L58.0 43.3 L58.5 44.5 L59.0 36.7 L59.5 37.3 L60.0 35.4 L60.5 45.5 L61.0 46.8 L61.5 53.6 L62.0 56.6 L62.5 49.8 L63.0 48.3 L63.5 43.6 L64.0 38.3 L64.5 35.3 L65.0 33.4 L65.5 29.3 L66.0 26.4 L66.5 24.8 L67.0 20.6 L67.5 22.2 L68.0 32.6 L68.5 30.9 L69.0 34.5 L69.5 40.2 L70.0 42.7 L70.5 40.2 L71.0 29.8 L71.5 22.2 L72.0 33.4 L72.5 32.8 L73.0 29.8 L73.5 32.6 L74.0 28.5 L74.5 23.1 L75.0 20.0 L75.5 19.9 L76.0 28.2 L76.5 33.1 L77.0 32.7 L77.5 36.5 L78.0 34.7 L78.5 39.0 L79.0 42.8 L79.5 45.8 L80.0 43.8 L80.5 40.5 L81.0 38.0 L81.5 31.4 L82.0 30.7 L82.5 23.1 L83.0 23.8 L83.5 29.9 L84.0 33.8 L84.5 35.5 L85.0 36.9 L85.5 40.0 L86.0 37.5 L86.5 36.9 L87.0 31.9 L87.5 22.3 L88.0 29.0 L88.5 29.2 L89.0 30.1 L89.5 30.0 L90.0 34.3 L90.5 34.9 L91.0 42.8 L91.5 46.7 L92.0 45.7 L92.5 38.3 L93.0 35.2 L93.5 29.8 L94.0 28.4 L94.5 24.1 L95.0 23.3 L95.5 25.7 L96.0 30.1 L96.5 38.6 L97.0 36.0 L97.5 30.8 L98.0 24.6 L98.5 23.6 L99.0 16.0 L99.5 25.4 L100.0 28.4 L100.5 27.4 L101.0 31.9 L101.5 38.1 L102.0 41.2 L102.5 45.4 L103.0 44.0 L103.5 40.5 L104.0 32.2 L104.5 31.6 L105.0 26.9 L105.5 32.8 L106.0 37.4 L106.5 42.9 L107.0 51.2 L107.5 57.6 L108.0 65.0 L108.5 62.8 L109.0 61.4 L109.5 54.3 L110.0 45.5 L110.5 43.5 L111.0 38.7 L111.5 37.8 L112.0 31.5 L112.5 32.4 L113.0 32.6 L113.5 37.0 L114.0 42.7 L114.5 34.5 L115.0 29.3 L115.5 26.7 L116.0 25.5 L116.5 21.1 L117.0 11.2 L117.5 15.9 L118.0 25.2 L118.5 25.6 L119.0 20.3 L119.5 24.4 L120.0 19.6 L120.5 21.2 L121.0 25.7 L121.5 29.0 L122.0 29.5 L122.5 31.9 L123.0 38.2 L123.5 38.0 L124.0 37.9 L124.5 39.4 L125.0 39.1 L125.5 38.6 L126.0 39.6 L126.5 43.5 L127.0 44.3 L127.5 39.7 L128.0 36.6 L128.5 41.5 L129.0 40.5 L129.5 39.4 L130.0 31.9 L130.5 27.0 L131.0 27.0 L131.5 24.4 L132.0 18.9 L132.5 18.6 L133.0 25.5 L133.5 26.3 L134.0 31.5 L134.5 36.5 L135.0 38.0 L135.5 46.0 L136.0 48.1 L136.5 54.2 L137.0 47.9 L137.5 47.4 L138.0 42.5 L138.5 38.1 L139.0 37.7 L139.5 39.4 L140.0 45.6 L140.5 47.2 L141.0 55.2 L141.5 65.2 L142.0 66.9 L142.5 66.2 L143 70.4 Z" fill="#36b46c"/></svg><div class="ab" style="left:0;top:77.4px;width:143.6px;height:3px;background:#36b46c"></div><div class="ab" style="left:1.5px;top:74.4px;width:140.6px;height:3.3px;border-radius:2px;background:#f3912c"></div><div class="ab" style="left:0;top:0;width:143.6px;height:80.4px;border:2px solid #f4f4f4;border-radius:4px"></div></div>
<div class="ab" style="left:33.6px;top:0;width:1px;height:8px;background:#2d9a5a"></div>
<div class="ab" style="left:49.3px;top:0;width:1px;height:8px;background:#2d9a5a"></div>
<div class="ab" style="left:62.7px;top:0;width:1px;height:8px;background:#2d9a5a"></div>
<div class="ab" style="left:91.3px;top:0;width:1px;height:8px;background:#2d9a5a"></div>
<div class="ab" style="left:126.0px;top:0;width:1px;height:8px;background:#2d9a5a"></div>
<div class="ab" style="left:195.5px;top:0;width:1px;height:8px;background:#2d9a5a"></div>
<div class="ab" style="left:215.0px;top:0;width:1px;height:8px;background:#2d9a5a"></div>
<div class="ab" style="left:232.5px;top:0;width:1px;height:8px;background:#2d9a5a"></div>
<div class="ab" style="left:245.5px;top:0;width:1px;height:8px;background:#2d9a5a"></div>
<div class="ab" style="left:279.8px;top:0;width:1px;height:8px;background:#2d9a5a"></div>
<div class="ab" style="left:295.0px;top:0;width:1px;height:8px;background:#2d9a5a"></div>
<div class="ab" style="left:305.5px;top:0;width:1px;height:8px;background:#2d9a5a"></div>
</div>
<div class="ab" style="left:180px;top:322px;width:39px;height:16px;border-radius:3px;background:#d9d9d9"></div>
<div class="t" style="left:184px;top:324px;font-size:12px;color:#444">5.9 秒</div>
<div class="ab" style="left:298px;top:376px;width:17px;height:16px;border-radius:3px;background:#d9d9d9"></div>
<svg class="ab" style="left:299px;top:377px" width="15" height="14"><path d="M7.5 2 V12 M2.5 7 H12.5" stroke="#333" stroke-width="1.3"/></svg>
<div class="ab" style="left:176px;top:317px;width:2px;height:81px;background:#c98a55"></div>
<div class="ab" style="left:0;top:403px;width:1280px;height:3px;background:#111"></div>
<div class="ab" style="left:714.4px;top:75px;width:500.6px;height:281px;overflow:hidden;background:#fff">
<div class="ab" style="left:0;top:0;width:9px;height:281px;background:linear-gradient(#5d9ad8 0%,#86b2dc 10%,#7a9ec0 12%,#4a4a3c 14%,#5e5a44 24%,#4a5040 40%,#3e5a72 54%,#4c7096 66%,#2a3a48 77%,#1a2530 85%,#16222c 100%)"></div>
<div class="ab" style="left:489.5px;top:0;width:11.1px;height:281px;background:linear-gradient(#8cc0ee 0%,#7aaad8 5%,#2e3a40 8%,#1e2a30 30%,#2a3436 46%,#1a252b 60%,#1c2a36 80%,#16222c 100%)"></div>
<div class="ab" style="left:8.1px;top:0.0px;width:481.5px;height:281px;background:#ffffff;"></div>
<div class="ab" style="left:8.1px;top:0.0px;width:481.5px;height:4.5px;background:#e9ebf0;"></div>
<div class="ab" style="left:8.1px;top:0.0px;width:30px;height:4.5px;background:#ccd1da;"></div>
<div class="ab" style="left:37.6px;top:0.0px;width:28px;height:4.5px;background:#8a96ab;"></div>
<div class="ab" style="left:65.6px;top:0.0px;width:100px;height:4.5px;background:#ffffff;"></div>
<div class="ab" style="left:66.6px;top:0.5px;width:6px;height:3.5px;background:#3d7ad8;"></div>
<div class="ab" style="left:75.6px;top:1.5px;width:80px;height:1.5px;background:#666;opacity:.35"></div>
<div class="t" style="left:13.6px;top:8.3px;font-size:6px;color:#666;">☰</div>
<div class="t" style="left:23.6px;top:8.2px;font-size:5.3px;color:#7a7a7a;">文件</div>
<div class="ab" style="left:42.6px;top:8.0px;width:6px;height:5.5px;background:transparent;border:0.9px solid #8a8a8a;border-radius:1px;opacity:.75"></div>
<div class="ab" style="left:51.6px;top:8.0px;width:6px;height:5.5px;background:transparent;border:0.9px solid #8a8a8a;border-radius:1px;opacity:.75"></div>
<div class="ab" style="left:60.6px;top:8.0px;width:6px;height:5.5px;background:transparent;border:0.9px solid #8a8a8a;border-radius:1px;opacity:.75"></div>
<div class="ab" style="left:69.6px;top:8.0px;width:6px;height:5.5px;background:transparent;border:0.9px solid #8a8a8a;border-radius:1px;opacity:.75"></div>
<div class="ab" style="left:78.6px;top:8.0px;width:6px;height:5.5px;background:transparent;border:0.9px solid #8a8a8a;border-radius:1px;opacity:.75"></div>
<div class="ab" style="left:87.6px;top:8.0px;width:6px;height:5.5px;background:transparent;border-bottom:0.9px solid #999;border-radius:3px;opacity:.6"></div>
<div class="ab" style="left:96.6px;top:8.0px;width:6px;height:5.5px;background:transparent;border-bottom:0.9px solid #999;border-radius:3px;opacity:.6"></div>
<div class="ab" style="left:105.6px;top:8.0px;width:6px;height:5.5px;background:transparent;border-bottom:0.9px solid #999;border-radius:3px;opacity:.6"></div>
<div class="ab" style="left:136.6px;top:7.0px;width:22px;height:8.5px;background:#3d8ef0;border-radius:4.5px"></div>
<div class="t" style="left:142.1px;top:8.5px;font-size:5.3px;color:#ffffff;">开始</div>
<div class="t" style="left:166.6px;top:8.5px;font-size:5.3px;color:#7a7a7a;">插入</div>
<div class="t" style="left:187.6px;top:8.5px;font-size:5.3px;color:#7a7a7a;">页面布局</div>
<div class="t" style="left:219.6px;top:8.5px;font-size:5.3px;color:#7a7a7a;">引用</div>
<div class="t" style="left:242.6px;top:8.5px;font-size:5.3px;color:#7a7a7a;">邮件</div>
<div class="t" style="left:268.6px;top:8.5px;font-size:5.3px;color:#7a7a7a;">审阅</div>
<div class="t" style="left:290.6px;top:8.5px;font-size:5.3px;color:#7a7a7a;">视图</div>
<div class="t" style="left:314.6px;top:8.5px;font-size:5.3px;color:#7a7a7a;">章节</div>
<div class="t" style="left:335.6px;top:8.5px;font-size:5.3px;color:#7a7a7a;">特色功能</div>
<div class="t" style="left:398.6px;top:8.3px;font-size:5.3px;color:#7a7a7a;">☁ 未同步 &nbsp; ♙ 协作 &nbsp; ⇪ 分享 &nbsp; ⋮ &nbsp;︿</div>
<div class="ab" style="left:8.1px;top:44.0px;width:481.5px;height:1px;background:#e6e8ec;"></div>
<div class="ab" style="left:14.6px;top:22.5px;width:8.5px;height:10px;background:transparent;border:1px solid #8a8a8a;border-radius:1px"></div>
<div class="ab" style="left:18.1px;top:26.0px;width:5px;height:6px;background:#c5d4f5;border:0.8px solid #7a9ae0"></div>
<div class="t" style="left:11.6px;top:35.6px;font-size:5.2px;color:#7a7a7a;">粘贴 ▾</div>
<div class="t" style="left:29.1px;top:24.2px;font-size:6.5px;color:#8a8a8a;">✂</div>
<div class="t" style="left:37.6px;top:25.0px;font-size:5.2px;color:#9a9a9a;">剪切</div>
<div class="ab" style="left:30.1px;top:32.0px;width:5px;height:6.5px;background:transparent;border:0.9px solid #9a9a9a;border-radius:1px"></div>
<div class="t" style="left:37.6px;top:32.2px;font-size:5.2px;color:#9a9a9a;">复制</div>
<div class="ab" style="left:56.1px;top:22.5px;width:5.5px;height:9.5px;background:#dfe8fa;border:0.9px solid #7a9ae0;border-radius:2px 2px 1px 1px"></div>
<div class="t" style="left:51.6px;top:35.8px;font-size:5.2px;color:#5a6e98;">格式刷</div>
<div class="ab" style="left:70.6px;top:21.0px;width:0.7px;height:21px;background:#e2e2e2;"></div>
<div class="ab" style="left:203.6px;top:21.0px;width:0.7px;height:21px;background:#e2e2e2;"></div>
<div class="ab" style="left:301.6px;top:21.0px;width:0.7px;height:21px;background:#e2e2e2;"></div>
<div class="ab" style="left:411.6px;top:21.0px;width:0.7px;height:21px;background:#e2e2e2;"></div>
<div class="ab" style="left:438.6px;top:21.0px;width:0.7px;height:21px;background:#e2e2e2;"></div>
<div class="ab" style="left:468.6px;top:21.0px;width:0.7px;height:21px;background:#e2e2e2;"></div>
<div class="ab" style="left:72.6px;top:21.5px;width:46px;height:8.5px;background:#fff;border:0.8px solid #e2e2e2"></div>
<div class="t" style="left:74.1px;top:23.0px;font-size:5.6px;color:#444;">宋体 (正文)</div>
<div class="t" style="left:115.1px;top:23.5px;font-size:4.5px;color:#888;">▾</div>
<div class="ab" style="left:120.1px;top:21.5px;width:33px;height:8.5px;background:#fff;border:0.8px solid #e2e2e2"></div>
<div class="t" style="left:121.6px;top:23.0px;font-size:5.6px;color:#444;">四号</div>
<div class="t" style="left:149.6px;top:23.5px;font-size:4.5px;color:#888;">▾</div>
<div class="t" style="left:157.6px;top:21.8px;font-size:7.5px;color:#777;">A<sup style="font-size:3px">+</sup> &nbsp;A<sup style="font-size:3px">-</sup></div>
<div class="t" style="left:181.1px;top:22.0px;font-size:7px;color:#777;">◈</div>
<div class="t" style="left:191.6px;top:22.0px;font-size:6px;color:#5b7fd8;">㊀ ▾</div>
<div class="t" style="left:75.1px;top:32.0px;font-size:7px;color:#444;font-weight:bold">B</div>
<div class="t" style="left:88.6px;top:32.0px;font-size:7px;color:#666;font-style:italic">I</div>
<div class="t" style="left:100.1px;top:32.0px;font-size:6.5px;color:#7a8fd0;text-decoration:underline">U ▾</div>
<div class="t" style="left:114.1px;top:32.0px;font-size:6.5px;color:#d06060;">A ▾</div>
<div class="t" style="left:127.6px;top:32.0px;font-size:6.5px;color:#888;">X² &nbsp;X₂</div>
<div class="t" style="left:152.6px;top:32.0px;font-size:6.5px;color:#888;">A ▾ &nbsp;</div>
<div class="ab" style="left:167.6px;top:37.5px;width:6px;height:1.5px;background:#e6c020;"></div>
<div class="t" style="left:167.6px;top:31.5px;font-size:6.5px;color:#999;">✎ ▾</div>
<div class="ab" style="left:182.6px;top:37.5px;width:6px;height:1.5px;background:#3050c8;"></div>
<div class="t" style="left:183.1px;top:31.5px;font-size:6px;color:#666;">A ▾</div>
<div class="t" style="left:195.1px;top:32.0px;font-size:6.5px;color:#888;">囲</div>
<div class="ab" style="left:208.6px;top:24.0px;width:7px;height:5.5px;background:transparent;border-top:0.9px solid #8fa6d8;border-bottom:0.9px solid #8a8a8a;opacity:.75"></div>
<div class="ab" style="left:221.9px;top:24.0px;width:7px;height:5.5px;background:transparent;border-top:0.9px solid #8fa6d8;border-bottom:0.9px solid #8a8a8a;opacity:.75"></div>
<div class="ab" style="left:235.2px;top:24.0px;width:7px;height:5.5px;background:transparent;border-top:0.9px solid #8fa6d8;border-bottom:0.9px solid #8a8a8a;opacity:.75"></div>
<div class="ab" style="left:248.5px;top:24.0px;width:7px;height:5.5px;background:transparent;border-top:0.9px solid #8fa6d8;border-bottom:0.9px solid #8a8a8a;opacity:.75"></div>
<div class="ab" style="left:261.8px;top:24.0px;width:7px;height:5.5px;background:transparent;border-top:0.9px solid #8fa6d8;border-bottom:0.9px solid #8a8a8a;opacity:.75"></div>
<div class="ab" style="left:275.1px;top:24.0px;width:7px;height:5.5px;background:transparent;border-top:0.9px solid #8fa6d8;border-bottom:0.9px solid #8a8a8a;opacity:.75"></div>
<div class="ab" style="left:288.4px;top:24.0px;width:7px;height:5.5px;background:transparent;border-top:0.9px solid #8fa6d8;border-bottom:0.9px solid #8a8a8a;opacity:.75"></div>
<div class="ab" style="left:208.6px;top:34.5px;width:7px;height:5.5px;background:transparent;border-top:0.9px solid #8fa6d8;border-bottom:0.9px solid #8a8a8a;opacity:.75"></div>
<div class="ab" style="left:221.9px;top:34.5px;width:7px;height:5.5px;background:transparent;border-top:0.9px solid #8fa6d8;border-bottom:0.9px solid #8a8a8a;opacity:.75"></div>
<div class="ab" style="left:235.2px;top:34.5px;width:7px;height:5.5px;background:transparent;border-top:0.9px solid #8fa6d8;border-bottom:0.9px solid #8a8a8a;opacity:.75"></div>
<div class="ab" style="left:248.5px;top:34.5px;width:7px;height:5.5px;background:transparent;border-top:0.9px solid #8fa6d8;border-bottom:0.9px solid #8a8a8a;opacity:.75"></div>
<div class="ab" style="left:261.8px;top:34.5px;width:7px;height:5.5px;background:transparent;border-top:0.9px solid #8fa6d8;border-bottom:0.9px solid #8a8a8a;opacity:.75"></div>
<div class="ab" style="left:275.1px;top:34.5px;width:7px;height:5.5px;background:transparent;border-top:0.9px solid #8fa6d8;border-bottom:0.9px solid #8a8a8a;opacity:.75"></div>
<div class="ab" style="left:288.4px;top:34.5px;width:7px;height:5.5px;background:transparent;border-top:0.9px solid #8fa6d8;border-bottom:0.9px solid #8a8a8a;opacity:.75"></div>
<div class="ab" style="left:304.6px;top:21.5px;width:25.5px;height:19px;background:#e8eaef;"></div>
<div class="t" style="left:305.6px;top:25.0px;font-size:4.3px;color:#555;">AaBbCcDd</div>
<div class="t" style="left:331.1px;top:23.2px;font-size:9.2px;color:#111;font-weight:bold">AaBb</div>
<div class="t" style="left:355.1px;top:24.6px;font-size:6.7px;color:#333;font-weight:bold;letter-spacing:-0.2px">AaBbCc</div>
<div class="t" style="left:380.1px;top:24.6px;font-size:6.7px;color:#333;font-weight:bold;letter-spacing:-0.2px">AaBbCc</div>
<div class="t" style="left:312.6px;top:35.8px;font-size:5.2px;color:#666;">正文</div>
<div class="t" style="left:335.6px;top:35.8px;font-size:5.2px;color:#888;">标题 1</div>
<div class="t" style="left:360.6px;top:35.8px;font-size:5.2px;color:#888;">标题 2</div>
<div class="t" style="left:385.6px;top:35.8px;font-size:5.2px;color:#888;">标题 3</div>
<div class="ab" style="left:405.6px;top:22.0px;width:4px;height:18px;background:#fff;border:0.6px solid #e5e5e5"></div>
<div class="t" style="left:419.6px;top:21.8px;font-size:9px;color:#7a8fd0;">✍</div>
<div class="t" style="left:415.1px;top:36.0px;font-size:5.2px;color:#777;">新样式 ▾</div>
<div class="t" style="left:448.6px;top:21.5px;font-size:8px;color:#888;">🔧</div>
<div class="t" style="left:442.6px;top:36.0px;font-size:5.2px;color:#777;">文字工具 ▾</div>
<div class="ab" style="left:481.6px;top:24.0px;width:8px;height:8px;background:transparent;border:0.9px solid #7aa0e8;border-radius:4px"></div>
<div class="t" style="left:474.6px;top:36.0px;font-size:5.2px;color:#777;">查找</div>
<div class="ab" style="left:484.6px;top:22.0px;width:5px;height:21px;background:#b8b8bc;"></div>
<div class="ab" style="left:8.1px;top:45.0px;width:87px;height:228px;background:#f3f4f8;"></div>
<div class="ab" style="left:95.2px;top:45.0px;width:0.8px;height:228px;background:#e0e0e0;"></div>
<div class="ab" style="left:383.4px;top:45.0px;width:0.8px;height:228px;background:#e6e6e6;"></div>
<div class="ab" style="left:384.1px;top:45.0px;width:86.5px;height:228px;background:#f3f4f8;"></div>
<div class="ab" style="left:470.6px;top:45.0px;width:5px;height:228px;background:#f1f1f4;"></div>
<div class="ab" style="left:471.6px;top:82.0px;width:3.5px;height:55px;background:#dcdce0;border-radius:2px"></div>
<div class="t" style="left:471.4px;top:46.5px;font-size:4.5px;color:#666;">▴</div>
<div class="ab" style="left:475.6px;top:45.0px;width:14px;height:228px;background:#f9f9fb;"></div>
<svg class="ab" style="left:478.1px;top:59.0px" width="8" height="8"><path d="M1 7 L6 2 L7 3 L2 8Z" fill="none" stroke="#888" stroke-width="0.8"/></svg>
<svg class="ab" style="left:478.1px;top:73.1px" width="8" height="8"><rect x="0.8" y="0.8" width="4.5" height="4.5" fill="none" stroke="#888" stroke-width="0.8"/><rect x="2.8" y="2.8" width="4.5" height="4.5" fill="#f9f9fb" stroke="#888" stroke-width="0.8"/></svg>
<svg class="ab" style="left:478.1px;top:87.2px" width="8" height="8"><path d="M4 1 L7 5 A3 3 0 0 1 1 5Z" fill="none" stroke="#888" stroke-width="0.8"/></svg>
<svg class="ab" style="left:478.1px;top:101.3px" width="8" height="8"><circle cx="4" cy="4" r="3.2" fill="none" stroke="#888" stroke-width="0.8"/><circle cx="4" cy="4" r="1.2" fill="#888"/></svg>
<svg class="ab" style="left:478.1px;top:115.4px" width="8" height="8"><path d="M1.5 1 L6.5 4 L4 4.8 L3 7.5Z" fill="none" stroke="#888" stroke-width="0.8"/></svg>
<svg class="ab" style="left:478.1px;top:129.5px" width="8" height="8"><rect x="1.2" y="3.5" width="5.6" height="4" rx="0.8" fill="none" stroke="#888" stroke-width="0.8"/><path d="M2.5 3.5 V2.5 A1.5 1.5 0 0 1 5.5 2.5 V3.5" fill="none" stroke="#888" stroke-width="0.8"/></svg>
<svg class="ab" style="left:478.1px;top:143.6px" width="8" height="8"><path d="M0.5 2.5 H7.5 M0.5 5.5 H7.5" stroke="#888" stroke-width="0.8"/><circle cx="5" cy="2.5" r="1" fill="#888"/><circle cx="2.5" cy="5.5" r="1" fill="#888"/></svg>
<svg class="ab" style="left:478.1px;top:157.7px" width="8" height="8"><circle cx="4" cy="4" r="3.2" fill="none" stroke="#888" stroke-width="0.8"/><path d="M4 2 V4 H5.5" stroke="#888" stroke-width="0.8" fill="none"/></svg>
<svg class="ab" style="left:478.1px;top:171.8px" width="8" height="8"><rect x="1" y="1" width="6" height="6" fill="none" stroke="#888" stroke-width="0.8"/><path d="M1 6 L3.5 3.5 L7 7" stroke="#888" stroke-width="0.8" fill="none"/></svg>
<svg class="ab" style="left:478.1px;top:185.9px" width="8" height="8"><rect x="1" y="1.5" width="6" height="5" fill="none" stroke="#888" stroke-width="0.8"/><circle cx="4" cy="4" r="1.3" fill="none" stroke="#888" stroke-width="0.7"/></svg>
<div class="ab" style="left:475.6px;top:48.0px;width:8px;height:1px;background:#ccc;"></div>
<div class="t" style="left:138.6px;top:83.5px;font-size:13.1px;color:#5174c2;font-family:'Liberation Serif',serif;text-shadow:0 1px 1px rgba(80,110,190,.35)">超级简单的影视配音制作搞笑电</div>
<div class="t" style="left:138.6px;top:107.5px;font-size:13.1px;color:#5174c2;font-family:'Liberation Serif',serif;text-shadow:0 1px 1px rgba(80,110,190,.35)">影或者电影解说视频</div>
<div class="ab" style="left:8.1px;top:273.0px;width:481.5px;height:8px;background:#f4f4f6;"></div>
<div class="t" style="left:12.6px;top:275.2px;font-size:4.6px;color:#8a8a8a;">页码: 1 &nbsp;&nbsp;&nbsp; 页面: 1/2 &nbsp;&nbsp;&nbsp;&nbsp; 节: 1/1 &nbsp;&nbsp; 行: 26 &nbsp; 列: 16 &nbsp;&nbsp; 字数: 338 &nbsp;&nbsp;</div>
<div class="ab" style="left:145.6px;top:275.5px;width:3.5px;height:3.5px;background:#5cb85c;border-radius:2px"></div>
<div class="t" style="left:151.6px;top:275.2px;font-size:4.6px;color:#8a8a8a;">拼写检查</div>
<div class="t" style="left:178.6px;top:275.2px;font-size:4.6px;color:#8a8a8a;">◎ 文档未保护</div>
<div class="ab" style="left:211.6px;top:275.5px;width:3.5px;height:3.5px;background:#5cb85c;border-radius:2px"></div>
<div class="t" style="left:217.6px;top:275.2px;font-size:4.6px;color:#8a8a8a;">未标记与门</div>
<div class="t" style="left:321.6px;top:275.0px;font-size:5px;color:#8a8a8a;">⛶ &nbsp;▣ &nbsp;▤ &nbsp;⊕ &nbsp;⊙</div>
<div class="t" style="left:379.1px;top:274.5px;font-size:6px;color:#555;">–</div>
<div class="ab" style="left:384.6px;top:277.3px;width:50px;height:0.8px;background:#6c86b8;"></div>
<div class="ab" style="left:407.6px;top:274.8px;width:5.5px;height:5.5px;background:#fff;border:0.8px solid #666;border-radius:3px"></div>
<div class="t" style="left:438.1px;top:274.0px;font-size:7px;color:#555;">+</div>
<div class="t" style="left:452.6px;top:275.2px;font-size:4.6px;color:#8a8a8a;">124 %</div>
<div class="t" style="left:476.6px;top:274.5px;font-size:5.5px;color:#999;">⌗</div>
<div class="ab" style="left:8.1px;top:223.5px;width:384px;height:40px;background:linear-gradient(90deg,rgba(84,84,84,.94) 0%,rgba(84,84,84,.94) 86%,rgba(84,84,84,0) 100%);"></div>
<div class="t" style="left:35.1px;top:228.0px;font-size:14.5px;color:#f0f0f0;letter-spacing:0.3px">第一步：下载一部电影作为案例进行配音剪辑。</div>
</div>
<svg class="ab" style="left:719px;top:368px" width="14" height="22"><rect x="4" y="1" width="6" height="12" rx="3" fill="none" stroke="#bbb" stroke-width="1.2"/><path d="M2 9 Q2 15.5 7 15.5 Q12 15.5 12 9 M7 15.5 V20 M3.5 20.5 H10.5" stroke="#bbb" stroke-width="1.2" fill="none"/></svg>
<svg class="ab" style="left:918px;top:372px" width="92" height="20"><rect x="1.7" y="2" width="2.6" height="12" fill="#cdcdcd"/><path d="M4.3 8 L15.5 2 V14Z" fill="#cdcdcd"/><path d="M36.8 -1.7 L56 8 L36.8 17.7Z" fill="#cdcdcd"/><path d="M75.7 2 L86.5 8 L75.7 14Z" fill="#cdcdcd"/><rect x="86.8" y="2" width="2.4" height="12" fill="#cdcdcd"/></svg>
<svg class="ab" style="left:1193px;top:371px" width="20" height="19"><path d="M2 2 L8 8 M2 2 H7 M2 2 V7 M18 17 L12 11 M18 17 H13 M18 17 V12" stroke="#cdcdcd" stroke-width="1.5" fill="none"/></svg>
<div class="ab" style="left:0;top:406px;width:1280px;height:29px;background:#383838"></div>
<div class="ab" style="left:0;top:435px;width:1280px;height:1px;background:#2a2a2a"></div>
<div class="t" style="left:600px;top:414px;font-size:14px;color:#e6e6e6;letter-spacing:-0.7px">01:51</div>
<div class="t" style="left:637px;top:414px;font-size:14px;color:#888">/</div>
<div class="t" style="left:650px;top:414px;font-size:14px;color:#999">02:30</div>
<div class="ab" style="left:1107px;top:418px;width:91px;height:4px;background:#4a4a4a;border-radius:2px"></div>
<div class="ab" style="left:1107px;top:415.5px;width:1.6px;height:9px;background:#5e5e5e"></div>
<div class="ab" style="left:1124px;top:415.5px;width:1.6px;height:9px;background:#5e5e5e"></div>
<div class="ab" style="left:1152px;top:415.5px;width:1.6px;height:9px;background:#5e5e5e"></div>
<div class="ab" style="left:1166px;top:415.5px;width:1.6px;height:9px;background:#5e5e5e"></div>
<div class="ab" style="left:1180px;top:415.5px;width:1.6px;height:9px;background:#5e5e5e"></div>
<div class="ab" style="left:1197px;top:415.5px;width:1.6px;height:9px;background:#5e5e5e"></div>
<div class="ab" style="left:1134px;top:412px;width:8px;height:16px;border-radius:4px;background:#a8a8a8"></div>
<div class="t" style="left:1229px;top:414.5px;font-size:13.3px;color:#cfcfcf">设置</div>
<div class="ab" style="left:0;top:436px;width:1271px;height:323px;background:#353535"></div>
<div class="ab" style="left:1271px;top:436px;width:9px;height:323px;background:#3d3d3d"></div>
<div class="ab" style="left:1275px;top:438px;width:7px;height:240px;border-radius:4px;background:#8a8a8a"></div>
<div class="ab" style="left:0;top:758.5px;width:1280px;height:5.5px;background:#3c3c3c;border-top:1px solid #2c2c2c"></div>
<div class="ab" style="left:1px;top:762.5px;width:571px;height:4px;border-radius:2px;background:#a8a8a8"></div>
<svg width="0" height="0" style="position:absolute"><defs>
<symbol id="d1" viewBox="0 0 122 72"><rect x="0" y="0" width="122" height="72" fill="#0f1c25"/><rect x="0" y="0" width="2.5" height="9" fill="#5a9ad8"/><rect x="120" y="0" width="2" height="10" fill="#7db4e8"/><rect x="2.5" y="0" width="117.5" height="71.5" fill="#ffffff"/><rect x="2.5" y="0" width="117.5" height="3" fill="#e4e7ee"/><rect x="9" y="0.6" width="7" height="1.8" fill="#aab2c2"/><rect x="17" y="0.8" width="25" height="1.4" fill="#f6f7fa"/><rect x="44" y="4.5" width="5" height="2" rx="1" fill="#5a9cf2"/><rect x="9.8" y="4.8" width="2" height="1" fill="#ccc"/><rect x="13.6" y="4.8" width="2" height="1" fill="#ccc"/><rect x="17.4" y="4.8" width="2" height="1" fill="#ccc"/><rect x="25.0" y="4.8" width="2" height="1" fill="#ccc"/><rect x="28.8" y="4.8" width="2" height="1" fill="#ccc"/><rect x="32.6" y="4.8" width="2" height="1" fill="#ccc"/><rect x="40.2" y="4.8" width="2" height="1" fill="#ccc"/><rect x="44.0" y="4.8" width="2" height="1" fill="#ccc"/><rect x="47.8" y="4.8" width="2" height="1" fill="#ccc"/><rect x="55.4" y="4.8" width="2" height="1" fill="#ccc"/><rect x="59.2" y="4.8" width="2" height="1" fill="#ccc"/><rect x="63.0" y="4.8" width="2" height="1" fill="#ccc"/><rect x="70.6" y="4.8" width="2" height="1" fill="#ccc"/><rect x="74.4" y="4.8" width="2" height="1" fill="#ccc"/><rect x="78.2" y="4.8" width="2" height="1" fill="#ccc"/><rect x="85.8" y="4.8" width="2" height="1" fill="#ccc"/><rect x="89.6" y="4.8" width="2" height="1" fill="#ccc"/><rect x="93.4" y="4.8" width="2" height="1" fill="#ccc"/><rect x="101.0" y="4.8" width="2" height="1" fill="#ccc"/><rect x="104.8" y="4.8" width="2" height="1" fill="#ccc"/><rect x="108.6" y="4.8" width="2" height="1" fill="#ccc"/><rect x="116.2" y="4.8" width="2" height="1" fill="#ccc"/><rect x="6.0" y="7.8" width="1.2" height="1" fill="#d2d2d2"/><rect x="8.6" y="10.2" width="1.2" height="1" fill="#d2d2d2"/><rect x="11.2" y="7.8" width="1.2" height="1" fill="#d2d2d2"/><rect x="13.8" y="10.2" width="1.2" height="1" fill="#d2d2d2"/><rect x="16.4" y="7.8" width="1.2" height="1" fill="#d2d2d2"/><rect x="19.0" y="10.2" width="1.2" height="1" fill="#d2d2d2"/><rect x="21.6" y="7.8" width="1.2" height="1" fill="#d2d2d2"/><rect x="24.2" y="10.2" width="1.2" height="1" fill="#d2d2d2"/><rect x="26.8" y="7.8" width="1.2" height="1" fill="#d2d2d2"/><rect x="29.4" y="10.2" width="1.2" height="1" fill="#d2d2d2"/><rect x="32.0" y="7.8" width="1.2" height="1" fill="#d2d2d2"/><rect x="34.6" y="10.2" width="1.2" height="1" fill="#d2d2d2"/><rect x="37.2" y="7.8" width="1.2" height="1" fill="#d2d2d2"/><rect x="39.8" y="10.2" width="1.2" height="1" fill="#d2d2d2"/><rect x="42.4" y="7.8" width="1.2" height="1" fill="#d2d2d2"/><rect x="45.0" y="10.2" width="1.2" height="1" fill="#d2d2d2"/><rect x="47.6" y="7.8" width="1.2" height="1" fill="#d2d2d2"/><rect x="50.2" y="10.2" width="1.2" height="1" fill="#d2d2d2"/><rect x="52.8" y="7.8" width="1.2" height="1" fill="#d2d2d2"/><rect x="55.4" y="10.2" width="1.2" height="1" fill="#d2d2d2"/><rect x="58.0" y="7.8" width="1.2" height="1" fill="#d2d2d2"/><rect x="60.6" y="10.2" width="1.2" height="1" fill="#d2d2d2"/><rect x="63.2" y="7.8" width="1.2" height="1" fill="#d2d2d2"/><rect x="65.8" y="10.2" width="1.2" height="1" fill="#d2d2d2"/><rect x="68.4" y="7.8" width="1.2" height="1" fill="#d2d2d2"/><rect x="71.0" y="10.2" width="1.2" height="1" fill="#d2d2d2"/><rect x="73.6" y="7.8" width="1.2" height="1" fill="#d2d2d2"/><rect x="76.2" y="10.2" width="1.2" height="1" fill="#d2d2d2"/><rect x="78.8" y="7.8" width="1.2" height="1" fill="#d2d2d2"/><rect x="81.4" y="10.2" width="1.2" height="1" fill="#d2d2d2"/><rect x="84.0" y="7.8" width="1.2" height="1" fill="#d2d2d2"/><rect x="86.6" y="10.2" width="1.2" height="1" fill="#d2d2d2"/><rect x="89.2" y="7.8" width="1.2" height="1" fill="#d2d2d2"/><rect x="91.8" y="10.2" width="1.2" height="1" fill="#d2d2d2"/><rect x="94.4" y="7.8" width="1.2" height="1" fill="#d2d2d2"/><rect x="97.0" y="10.2" width="1.2" height="1" fill="#d2d2d2"/><rect x="99.6" y="7.8" width="1.2" height="1" fill="#d2d2d2"/><rect x="102.2" y="10.2" width="1.2" height="1" fill="#d2d2d2"/><rect x="104.8" y="7.8" width="1.2" height="1" fill="#d2d2d2"/><rect x="107.4" y="10.2" width="1.2" height="1" fill="#d2d2d2"/><rect x="110.0" y="7.8" width="1.2" height="1" fill="#d2d2d2"/><rect x="112.6" y="10.2" width="1.2" height="1" fill="#d2d2d2"/><rect x="115.2" y="7.8" width="1.2" height="1" fill="#d2d2d2"/><rect x="117.8" y="10.2" width="1.2" height="1" fill="#d2d2d2"/><rect x="80" y="8" width="22" height="3.5" fill="#f0f0f0"/><rect x="82" y="8.6" width="18" height="1.6" fill="#cfcfcf"/><rect x="2.5" y="13" width="117.5" height="0.5" fill="#ececec"/><rect x="2.5" y="13.5" width="21" height="55.5" fill="#f4f5f9"/><rect x="93.5" y="13.5" width="23" height="55.5" fill="#f4f5f9"/><rect x="116.5" y="13.5" width="3.5" height="55.5" fill="#fbfbfb"/><rect x="117.3" y="20.0" width="1.8" height="1.5" fill="#ccc"/><rect x="117.3" y="23.5" width="1.8" height="1.5" fill="#ccc"/><rect x="117.3" y="27.0" width="1.8" height="1.5" fill="#ccc"/><rect x="117.3" y="30.5" width="1.8" height="1.5" fill="#ccc"/><rect x="117.3" y="34.0" width="1.8" height="1.5" fill="#ccc"/><rect x="117.3" y="37.5" width="1.8" height="1.5" fill="#ccc"/><rect x="117.3" y="41.0" width="1.8" height="1.5" fill="#ccc"/><rect x="117.3" y="44.5" width="1.8" height="1.5" fill="#ccc"/><rect x="117.3" y="48.0" width="1.8" height="1.5" fill="#ccc"/><rect x="117.3" y="51.5" width="1.8" height="1.5" fill="#ccc"/><rect x="2.5" y="69" width="117.5" height="2.5" fill="#f3f3f5"/><rect x="7" y="69.8" width="3.5" height="0.9" fill="#d4d4d4"/><rect x="13" y="69.8" width="3.5" height="0.9" fill="#d4d4d4"/><rect x="19" y="69.8" width="3.5" height="0.9" fill="#d4d4d4"/><rect x="25" y="69.8" width="3.5" height="0.9" fill="#d4d4d4"/><rect x="31" y="69.8" width="3.5" height="0.9" fill="#d4d4d4"/><rect x="37" y="69.8" width="3.5" height="0.9" fill="#d4d4d4"/><rect x="43" y="69.8" width="3.5" height="0.9" fill="#d4d4d4"/><rect x="49" y="69.8" width="3.5" height="0.9" fill="#d4d4d4"/><rect x="55" y="69.8" width="3.5" height="0.9" fill="#d4d4d4"/><rect x="34" y="23" width="46" height="0.9" fill="#8aa3da"/><rect x="34" y="28" width="33" height="0.9" fill="#8aa3da"/></symbol>
<symbol id="d2" viewBox="0 0 122 72"><rect x="0" y="0" width="122" height="72" fill="#0f1c25"/><rect x="0" y="0" width="2.5" height="9" fill="#5a9ad8"/><rect x="120" y="0" width="2" height="10" fill="#7db4e8"/><rect x="2.5" y="0" width="117.5" height="71.5" fill="#ffffff"/><rect x="2.5" y="0" width="117.5" height="3" fill="#e4e7ee"/><rect x="9" y="0.6" width="7" height="1.8" fill="#aab2c2"/><rect x="17" y="0.8" width="25" height="1.4" fill="#f6f7fa"/><rect x="44" y="4.5" width="5" height="2" rx="1" fill="#5a9cf2"/><rect x="9.8" y="4.8" width="2" height="1" fill="#ccc"/><rect x="13.6" y="4.8" width="2" height="1" fill="#ccc"/><rect x="17.4" y="4.8" width="2" height="1" fill="#ccc"/><rect x="25.0" y="4.8" width="2" height="1" fill="#ccc"/><rect x="28.8" y="4.8" width="2" height="1" fill="#ccc"/><rect x="32.6" y="4.8" width="2" height="1" fill="#ccc"/><rect x="40.2" y="4.8" width="2" height="1" fill="#ccc"/><rect x="44.0" y="4.8" width="2" height="1" fill="#ccc"/><rect x="47.8" y="4.8" width="2" height="1" fill="#ccc"/><rect x="55.4" y="4.8" width="2" height="1" fill="#ccc"/><rect x="59.2" y="4.8" width="2" height="1" fill="#ccc"/><rect x="63.0" y="4.8" width="2" height="1" fill="#ccc"/><rect x="70.6" y="4.8" width="2" height="1" fill="#ccc"/><rect x="74.4" y="4.8" width="2" height="1" fill="#ccc"/><rect x="78.2" y="4.8" width="2" height="1" fill="#ccc"/><rect x="85.8" y="4.8" width="2" height="1" fill="#ccc"/><rect x="89.6" y="4.8" width="2" height="1" fill="#ccc"/><rect x="93.4" y="4.8" width="2" height="1" fill="#ccc"/><rect x="101.0" y="4.8" width="2" height="1" fill="#ccc"/><rect x="104.8" y="4.8" width="2" height="1" fill="#ccc"/><rect x="108.6" y="4.8" width="2" height="1" fill="#ccc"/><rect x="116.2" y="4.8" width="2" height="1" fill="#ccc"/><rect x="6.0" y="7.8" width="1.2" height="1" fill="#d2d2d2"/><rect x="8.6" y="10.2" width="1.2" height="1" fill="#d2d2d2"/><rect x="11.2" y="7.8" width="1.2" height="1" fill="#d2d2d2"/><rect x="13.8" y="10.2" width="1.2" height="1" fill="#d2d2d2"/><rect x="16.4" y="7.8" width="1.2" height="1" fill="#d2d2d2"/><rect x="19.0" y="10.2" width="1.2" height="1" fill="#d2d2d2"/><rect x="21.6" y="7.8" width="1.2" height="1" fill="#d2d2d2"/><rect x="24.2" y="10.2" width="1.2" height="1" fill="#d2d2d2"/><rect x="26.8" y="7.8" width="1.2" height="1" fill="#d2d2d2"/><rect x="29.4" y="10.2" width="1.2" height="1" fill="#d2d2d2"/><rect x="32.0" y="7.8" width="1.2" height="1" fill="#d2d2d2"/><rect x="34.6" y="10.2" width="1.2" height="1" fill="#d2d2d2"/><rect x="37.2" y="7.8" width="1.2" height="1" fill="#d2d2d2"/><rect x="39.8" y="10.2" width="1.2" height="1" fill="#d2d2d2"/><rect x="42.4" y="7.8" width="1.2" height="1" fill="#d2d2d2"/><rect x="45.0" y="10.2" width="1.2" height="1" fill="#d2d2d2"/><rect x="47.6" y="7.8" width="1.2" height="1" fill="#d2d2d2"/><rect x="50.2" y="10.2" width="1.2" height="1" fill="#d2d2d2"/><rect x="52.8" y="7.8" width="1.2" height="1" fill="#d2d2d2"/><rect x="55.4" y="10.2" width="1.2" height="1" fill="#d2d2d2"/><rect x="58.0" y="7.8" width="1.2" height="1" fill="#d2d2d2"/><rect x="60.6" y="10.2" width="1.2" height="1" fill="#d2d2d2"/><rect x="63.2" y="7.8" width="1.2" height="1" fill="#d2d2d2"/><rect x="65.8" y="10.2" width="1.2" height="1" fill="#d2d2d2"/><rect x="68.4" y="7.8" width="1.2" height="1" fill="#d2d2d2"/><rect x="71.0" y="10.2" width="1.2" height="1" fill="#d2d2d2"/><rect x="73.6" y="7.8" width="1.2" height="1" fill="#d2d2d2"/><rect x="76.2" y="10.2" width="1.2" height="1" fill="#d2d2d2"/><rect x="78.8" y="7.8" width="1.2" height="1" fill="#d2d2d2"/><rect x="81.4" y="10.2" width="1.2" height="1" fill="#d2d2d2"/><rect x="84.0" y="7.8" width="1.2" height="1" fill="#d2d2d2"/><rect x="86.6" y="10.2" width="1.2" height="1" fill="#d2d2d2"/><rect x="89.2" y="7.8" width="1.2" height="1" fill="#d2d2d2"/><rect x="91.8" y="10.2" width="1.2" height="1" fill="#d2d2d2"/><rect x="94.4" y="7.8" width="1.2" height="1" fill="#d2d2d2"/><rect x="97.0" y="10.2" width="1.2" height="1" fill="#d2d2d2"/><rect x="99.6" y="7.8" width="1.2" height="1" fill="#d2d2d2"/><rect x="102.2" y="10.2" width="1.2" height="1" fill="#d2d2d2"/><rect x="104.8" y="7.8" width="1.2" height="1" fill="#d2d2d2"/><rect x="107.4" y="10.2" width="1.2" height="1" fill="#d2d2d2"/><rect x="110.0" y="7.8" width="1.2" height="1" fill="#d2d2d2"/><rect x="112.6" y="10.2" width="1.2" height="1" fill="#d2d2d2"/><rect x="115.2" y="7.8" width="1.2" height="1" fill="#d2d2d2"/><rect x="117.8" y="10.2" width="1.2" height="1" fill="#d2d2d2"/><rect x="80" y="8" width="22" height="3.5" fill="#f0f0f0"/><rect x="82" y="8.6" width="18" height="1.6" fill="#cfcfcf"/><rect x="2.5" y="13" width="117.5" height="0.5" fill="#ececec"/><rect x="2.5" y="13.5" width="21" height="55.5" fill="#f4f5f9"/><rect x="93.5" y="13.5" width="23" height="55.5" fill="#f4f5f9"/><rect x="116.5" y="13.5" width="3.5" height="55.5" fill="#fbfbfb"/><rect x="117.3" y="20.0" width="1.8" height="1.5" fill="#ccc"/><rect x="117.3" y="23.5" width="1.8" height="1.5" fill="#ccc"/><rect x="117.3" y="27.0" width="1.8" height="1.5" fill="#ccc"/><rect x="117.3" y="30.5" width="1.8" height="1.5" fill="#ccc"/><rect x="117.3" y="34.0" width="1.8" height="1.5" fill="#ccc"/><rect x="117.3" y="37.5" width="1.8" height="1.5" fill="#ccc"/><rect x="117.3" y="41.0" width="1.8" height="1.5" fill="#ccc"/><rect x="117.3" y="44.5" width="1.8" height="1.5" fill="#ccc"/><rect x="117.3" y="48.0" width="1.8" height="1.5" fill="#ccc"/><rect x="117.3" y="51.5" width="1.8" height="1.5" fill="#ccc"/><rect x="2.5" y="69" width="117.5" height="2.5" fill="#f3f3f5"/><rect x="7" y="69.8" width="3.5" height="0.9" fill="#d4d4d4"/><rect x="13" y="69.8" width="3.5" height="0.9" fill="#d4d4d4"/><rect x="19" y="69.8" width="3.5" height="0.9" fill="#d4d4d4"/><rect x="25" y="69.8" width="3.5" height="0.9" fill="#d4d4d4"/><rect x="31" y="69.8" width="3.5" height="0.9" fill="#d4d4d4"/><rect x="37" y="69.8" width="3.5" height="0.9" fill="#d4d4d4"/><rect x="43" y="69.8" width="3.5" height="0.9" fill="#d4d4d4"/><rect x="49" y="69.8" width="3.5" height="0.9" fill="#d4d4d4"/><rect x="55" y="69.8" width="3.5" height="0.9" fill="#d4d4d4"/><rect x="34" y="18" width="22" height="0.9" fill="#cfcfcf"/><rect x="34" y="21.5" width="18" height="0.9" fill="#cfcfcf"/><rect x="34" y="24.5" width="12" height="0.9" fill="#cfcfcf"/><rect x="34" y="27.0" width="6" height="0.9" fill="#cfcfcf"/><rect x="41" y="27.0" width="13" height="0.9" fill="#aab6f0"/><rect x="62" y="27.0" width="6" height="0.9" fill="#cfcfcf"/><rect x="69" y="27.0" width="16" height="0.9" fill="#aab6f0"/><rect x="34" y="29.2" width="6" height="0.9" fill="#cfcfcf"/><rect x="41" y="29.2" width="13" height="0.9" fill="#aab6f0"/><rect x="62" y="29.2" width="6" height="0.9" fill="#cfcfcf"/><rect x="69" y="29.2" width="16" height="0.9" fill="#aab6f0"/><rect x="34" y="31.4" width="6" height="0.9" fill="#cfcfcf"/><rect x="41" y="31.4" width="13" height="0.9" fill="#aab6f0"/><rect x="62" y="31.4" width="6" height="0.9" fill="#cfcfcf"/><rect x="69" y="31.4" width="16" height="0.9" fill="#aab6f0"/><rect x="34" y="33.6" width="6" height="0.9" fill="#cfcfcf"/><rect x="41" y="33.6" width="13" height="0.9" fill="#aab6f0"/><rect x="62" y="33.6" width="6" height="0.9" fill="#cfcfcf"/><rect x="69" y="33.6" width="16" height="0.9" fill="#aab6f0"/><rect x="34" y="35.8" width="6" height="0.9" fill="#cfcfcf"/><rect x="41" y="35.8" width="13" height="0.9" fill="#aab6f0"/><rect x="62" y="35.8" width="6" height="0.9" fill="#cfcfcf"/><rect x="69" y="35.8" width="16" height="0.9" fill="#aab6f0"/><rect x="34" y="38.0" width="6" height="0.9" fill="#cfcfcf"/><rect x="41" y="38.0" width="13" height="0.9" fill="#aab6f0"/><rect x="62" y="38.0" width="6" height="0.9" fill="#cfcfcf"/><rect x="69" y="38.0" width="16" height="0.9" fill="#aab6f0"/><rect x="34" y="40.2" width="6" height="0.9" fill="#cfcfcf"/><rect x="41" y="40.2" width="13" height="0.9" fill="#aab6f0"/><rect x="62" y="40.2" width="6" height="0.9" fill="#cfcfcf"/><rect x="69" y="40.2" width="16" height="0.9" fill="#aab6f0"/><rect x="34" y="42.400000000000006" width="6" height="0.9" fill="#cfcfcf"/><rect x="41" y="42.400000000000006" width="13" height="0.9" fill="#aab6f0"/><rect x="62" y="42.400000000000006" width="6" height="0.9" fill="#cfcfcf"/><rect x="69" y="42.400000000000006" width="16" height="0.9" fill="#aab6f0"/><rect x="34" y="45.5" width="9" height="0.9" fill="#cfcfcf"/><rect x="45" y="45.5" width="14" height="0.9" fill="#aab6f0"/><rect x="62" y="45.5" width="6" height="0.9" fill="#cfcfcf"/><rect x="70" y="45.5" width="10" height="0.9" fill="#aab6f0"/><rect x="34" y="48.8" width="24" height="0.9" fill="#cfcfcf"/><rect x="34" y="52.3" width="38" height="0.9" fill="#cfcfcf"/><rect x="34" y="56" width="44" height="0.9" fill="#cfcfcf"/><rect x="34" y="59.6" width="46" height="0.9" fill="#ee9090"/><rect x="34" y="66.5" width="8" height="0.9" fill="#cfcfcf"/></symbol>
<symbol id="d3" viewBox="0 0 122 72"><rect x="0" y="0" width="122" height="72" fill="#0f1c25"/><rect x="0" y="0" width="2.5" height="9" fill="#5a9ad8"/><rect x="120" y="0" width="2" height="10" fill="#7db4e8"/><rect x="2.5" y="0" width="117.5" height="71.5" fill="#ffffff"/><rect x="2.5" y="0" width="117.5" height="3" fill="#e4e7ee"/><rect x="9" y="0.6" width="7" height="1.8" fill="#aab2c2"/><rect x="17" y="0.8" width="25" height="1.4" fill="#f6f7fa"/><rect x="44" y="4.5" width="5" height="2" rx="1" fill="#5a9cf2"/><rect x="9.8" y="4.8" width="2" height="1" fill="#ccc"/><rect x="13.6" y="4.8" width="2" height="1" fill="#ccc"/><rect x="17.4" y="4.8" width="2" height="1" fill="#ccc"/><rect x="25.0" y="4.8" width="2" height="1" fill="#ccc"/><rect x="28.8" y="4.8" width="2" height="1" fill="#ccc"/><rect x="32.6" y="4.8" width="2" height="1" fill="#ccc"/><rect x="40.2" y="4.8" width="2" height="1" fill="#ccc"/><rect x="44.0" y="4.8" width="2" height="1" fill="#ccc"/><rect x="47.8" y="4.8" width="2" height="1" fill="#ccc"/><rect x="55.4" y="4.8" width="2" height="1" fill="#ccc"/><rect x="59.2" y="4.8" width="2" height="1" fill="#ccc"/><rect x="63.0" y="4.8" width="2" height="1" fill="#ccc"/><rect x="70.6" y="4.8" width="2" height="1" fill="#ccc"/><rect x="74.4" y="4.8" width="2" height="1" fill="#ccc"/><rect x="78.2" y="4.8" width="2" height="1" fill="#ccc"/><rect x="85.8" y="4.8" width="2" height="1" fill="#ccc"/><rect x="89.6" y="4.8" width="2" height="1" fill="#ccc"/><rect x="93.4" y="4.8" width="2" height="1" fill="#ccc"/><rect x="101.0" y="4.8" width="2" height="1" fill="#ccc"/><rect x="104.8" y="4.8" width="2" height="1" fill="#ccc"/><rect x="108.6" y="4.8" width="2" height="1" fill="#ccc"/><rect x="116.2" y="4.8" width="2" height="1" fill="#ccc"/><rect x="6.0" y="7.8" width="1.2" height="1" fill="#d2d2d2"/><rect x="8.6" y="10.2" width="1.2" height="1" fill="#d2d2d2"/><rect x="11.2" y="7.8" width="1.2" height="1" fill="#d2d2d2"/><rect x="13.8" y="10.2" width="1.2" height="1" fill="#d2d2d2"/><rect x="16.4" y="7.8" width="1.2" height="1" fill="#d2d2d2"/><rect x="19.0" y="10.2" width="1.2" height="1" fill="#d2d2d2"/><rect x="21.6" y="7.8" width="1.2" height="1" fill="#d2d2d2"/><rect x="24.2" y="10.2" width="1.2" height="1" fill="#d2d2d2"/><rect x="26.8" y="7.8" width="1.2" height="1" fill="#d2d2d2"/><rect x="29.4" y="10.2" width="1.2" height="1" fill="#d2d2d2"/><rect x="32.0" y="7.8" width="1.2" height="1" fill="#d2d2d2"/><rect x="34.6" y="10.2" width="1.2" height="1" fill="#d2d2d2"/><rect x="37.2" y="7.8" width="1.2" height="1" fill="#d2d2d2"/><rect x="39.8" y="10.2" width="1.2" height="1" fill="#d2d2d2"/><rect x="42.4" y="7.8" width="1.2" height="1" fill="#d2d2d2"/><rect x="45.0" y="10.2" width="1.2" height="1" fill="#d2d2d2"/><rect x="47.6" y="7.8" width="1.2" height="1" fill="#d2d2d2"/><rect x="50.2" y="10.2" width="1.2" height="1" fill="#d2d2d2"/><rect x="52.8" y="7.8" width="1.2" height="1" fill="#d2d2d2"/><rect x="55.4" y="10.2" width="1.2" height="1" fill="#d2d2d2"/><rect x="58.0" y="7.8" width="1.2" height="1" fill="#d2d2d2"/><rect x="60.6" y="10.2" width="1.2" height="1" fill="#d2d2d2"/><rect x="63.2" y="7.8" width="1.2" height="1" fill="#d2d2d2"/><rect x="65.8" y="10.2" width="1.2" height="1" fill="#d2d2d2"/><rect x="68.4" y="7.8" width="1.2" height="1" fill="#d2d2d2"/><rect x="71.0" y="10.2" width="1.2" height="1" fill="#d2d2d2"/><rect x="73.6" y="7.8" width="1.2" height="1" fill="#d2d2d2"/><rect x="76.2" y="10.2" width="1.2" height="1" fill="#d2d2d2"/><rect x="78.8" y="7.8" width="1.2" height="1" fill="#d2d2d2"/><rect x="81.4" y="10.2" width="1.2" height="1" fill="#d2d2d2"/><rect x="84.0" y="7.8" width="1.2" height="1" fill="#d2d2d2"/><rect x="86.6" y="10.2" width="1.2" height="1" fill="#d2d2d2"/><rect x="89.2" y="7.8" width="1.2" height="1" fill="#d2d2d2"/><rect x="91.8" y="10.2" width="1.2" height="1" fill="#d2d2d2"/><rect x="94.4" y="7.8" width="1.2" height="1" fill="#d2d2d2"/><rect x="97.0" y="10.2" width="1.2" height="1" fill="#d2d2d2"/><rect x="99.6" y="7.8" width="1.2" height="1" fill="#d2d2d2"/><rect x="102.2" y="10.2" width="1.2" height="1" fill="#d2d2d2"/><rect x="104.8" y="7.8" width="1.2" height="1" fill="#d2d2d2"/><rect x="107.4" y="10.2" width="1.2" height="1" fill="#d2d2d2"/><rect x="110.0" y="7.8" width="1.2" height="1" fill="#d2d2d2"/><rect x="112.6" y="10.2" width="1.2" height="1" fill="#d2d2d2"/><rect x="115.2" y="7.8" width="1.2" height="1" fill="#d2d2d2"/><rect x="117.8" y="10.2" width="1.2" height="1" fill="#d2d2d2"/><rect x="80" y="8" width="22" height="3.5" fill="#f0f0f0"/><rect x="82" y="8.6" width="18" height="1.6" fill="#cfcfcf"/><rect x="2.5" y="13" width="117.5" height="0.5" fill="#ececec"/><rect x="2.5" y="13.5" width="21" height="55.5" fill="#f4f5f9"/><rect x="93.5" y="13.5" width="23" height="55.5" fill="#f4f5f9"/><rect x="116.5" y="13.5" width="3.5" height="55.5" fill="#fbfbfb"/><rect x="117.3" y="20.0" width="1.8" height="1.5" fill="#ccc"/><rect x="117.3" y="23.5" width="1.8" height="1.5" fill="#ccc"/><rect x="117.3" y="27.0" width="1.8" height="1.5" fill="#ccc"/><rect x="117.3" y="30.5" width="1.8" height="1.5" fill="#ccc"/><rect x="117.3" y="34.0" width="1.8" height="1.5" fill="#ccc"/><rect x="117.3" y="37.5" width="1.8" height="1.5" fill="#ccc"/><rect x="117.3" y="41.0" width="1.8" height="1.5" fill="#ccc"/><rect x="117.3" y="44.5" width="1.8" height="1.5" fill="#ccc"/><rect x="117.3" y="48.0" width="1.8" height="1.5" fill="#ccc"/><rect x="117.3" y="51.5" width="1.8" height="1.5" fill="#ccc"/><rect x="2.5" y="69" width="117.5" height="2.5" fill="#f3f3f5"/><rect x="7" y="69.8" width="3.5" height="0.9" fill="#d4d4d4"/><rect x="13" y="69.8" width="3.5" height="0.9" fill="#d4d4d4"/><rect x="19" y="69.8" width="3.5" height="0.9" fill="#d4d4d4"/><rect x="25" y="69.8" width="3.5" height="0.9" fill="#d4d4d4"/><rect x="31" y="69.8" width="3.5" height="0.9" fill="#d4d4d4"/><rect x="37" y="69.8" width="3.5" height="0.9" fill="#d4d4d4"/><rect x="43" y="69.8" width="3.5" height="0.9" fill="#d4d4d4"/><rect x="49" y="69.8" width="3.5" height="0.9" fill="#d4d4d4"/><rect x="55" y="69.8" width="3.5" height="0.9" fill="#d4d4d4"/><rect x="34" y="13.6" width="5" height="0.9" fill="#cfcfcf"/><rect x="40" y="13.6" width="14" height="0.9" fill="#aab6f0"/><rect x="55" y="13.6" width="6" height="0.9" fill="#cfcfcf"/><rect x="62" y="13.6" width="9" height="0.9" fill="#aab6f0"/><rect x="34" y="17.4" width="19" height="0.9" fill="#cfcfcf"/><rect x="34" y="21" width="38" height="0.9" fill="#cfcfcf"/><rect x="34" y="24.6" width="47" height="0.9" fill="#cfcfcf"/><rect x="34" y="28.2" width="50" height="0.9" fill="#ee9090"/><rect x="34" y="35.7" width="10" height="0.9" fill="#cfcfcf"/><rect x="34" y="39.4" width="50" height="0.9" fill="#cfcfcf"/><rect x="34" y="43" width="50" height="0.9" fill="#cfcfcf"/><rect x="34" y="46.7" width="24" height="0.9" fill="#cfcfcf"/><rect x="34" y="54.1" width="17" height="0.9" fill="#cfcfcf"/><rect x="34" y="57.7" width="23" height="0.9" fill="#cfcfcf"/><rect x="28" y="57.7" width="2" height="0.9" fill="#aab6f0"/></symbol>
<symbol id="wb" viewBox="0 0 122 72"><rect x="0" y="0" width="122" height="72" fill="#141414"/><rect x="4.5" y="0" width="117.5" height="72" fill="#fff"/><rect x="4.5" y="0" width="117.5" height="3.5" fill="#e9e9ea"/><circle cx="7" cy="1.8" r="0.7" fill="#e55"/><circle cx="9" cy="1.8" r="0.7" fill="#eb3"/><circle cx="11" cy="1.8" r="0.7" fill="#5b5"/><rect x="14" y="0.5" width="18" height="3" fill="#fff"/><rect x="36" y="1.3" width="10" height="1" fill="#b8c8e8"/><rect x="49" y="1.3" width="10" height="1" fill="#b8c8e8"/><rect x="62" y="1.3" width="10" height="1" fill="#b8c8e8"/><rect x="75" y="1.3" width="10" height="1" fill="#b8c8e8"/><rect x="88" y="1.3" width="10" height="1" fill="#b8c8e8"/><rect x="101" y="1.3" width="10" height="1" fill="#b8c8e8"/><rect x="8" y="4.5" width="100" height="1.2" fill="#d8d8d8"/><rect x="7" y="7.2" width="8" height="1" fill="#c8c8c8"/><rect x="19" y="7.2" width="8" height="1" fill="#c8c8c8"/><rect x="31" y="7.2" width="8" height="1" fill="#c8c8c8"/><rect x="43" y="7.2" width="8" height="1" fill="#c8c8c8"/><rect x="55" y="7.2" width="8" height="1" fill="#c8c8c8"/><rect x="67" y="7.2" width="8" height="1" fill="#c8c8c8"/><rect x="79" y="7.2" width="8" height="1" fill="#c8c8c8"/><rect x="91" y="7.2" width="8" height="1" fill="#c8c8c8"/><rect x="103" y="7.2" width="8" height="1" fill="#c8c8c8"/><rect x="6.5" y="11" width="114" height="6.5" fill="#303c58"/><rect x="8" y="13.5" width="18" height="1.3" fill="#aab"/><rect x="95" y="13.5" width="12" height="1.3" fill="#aab"/><rect x="110" y="12" width="4" height="4" fill="#ccd"/><rect x="6.5" y="17.5" width="114" height="1.5" fill="#b5b5b5"/><rect x="7" y="19" width="113" height="43" fill="#000"/><rect x="7.5" y="22" width="55" height="31" fill="#fff"/><rect x="8" y="23" width="53" height="22" fill="#a9c6f2"/><rect x="9" y="24.0" width="50" height="0.9" fill="#7a9ad8"/><rect x="9" y="26.3" width="50" height="0.9" fill="#7a9ad8"/><rect x="9" y="28.6" width="50" height="0.9" fill="#7a9ad8"/><rect x="9" y="30.9" width="50" height="0.9" fill="#7a9ad8"/><rect x="9" y="33.2" width="50" height="0.9" fill="#7a9ad8"/><rect x="9" y="35.5" width="50" height="0.9" fill="#7a9ad8"/><rect x="9" y="37.8" width="50" height="0.9" fill="#7a9ad8"/><rect x="9" y="40.1" width="50" height="0.9" fill="#7a9ad8"/><rect x="9" y="42.4" width="50" height="0.9" fill="#7a9ad8"/><rect x="64" y="21.5" width="55" height="31.5" fill="#3a3a3a"/><rect x="65" y="22.5" width="16.5" height="5.5" fill="#fff"/><circle cx="77" cy="25.2" r="1.3" fill="#cfe0f8"/><rect x="83" y="22.5" width="16.5" height="5.5" fill="#fff"/><circle cx="95" cy="25.2" r="1.3" fill="#cfe0f8"/><rect x="101" y="22.5" width="16.5" height="5.5" fill="#fff"/><circle cx="113" cy="25.2" r="1.3" fill="#cfe0f8"/><rect x="65" y="29.5" width="16.5" height="5.5" fill="#fff"/><circle cx="77" cy="32.2" r="1.3" fill="#cfe0f8"/><rect x="83" y="29.5" width="16.5" height="5.5" fill="#fff"/><circle cx="95" cy="32.2" r="1.3" fill="#cfe0f8"/><rect x="101" y="29.5" width="16.5" height="5.5" fill="#fff"/><circle cx="113" cy="32.2" r="1.3" fill="#cfe0f8"/><rect x="65" y="36.5" width="16.5" height="5.5" fill="#fff"/><circle cx="77" cy="39.2" r="1.3" fill="#cfe0f8"/><rect x="83" y="36.5" width="16.5" height="5.5" fill="#fff"/><circle cx="95" cy="39.2" r="1.3" fill="#cfe0f8"/><rect x="101" y="36.5" width="16.5" height="5.5" fill="#7fa6f2"/><circle cx="113" cy="39.2" r="1.3" fill="#cfe0f8"/><rect x="65" y="43.5" width="16.5" height="5.5" fill="#fff"/><circle cx="77" cy="46.2" r="1.3" fill="#cfe0f8"/><rect x="83" y="43.5" width="16.5" height="5.5" fill="#fff"/><circle cx="95" cy="46.2" r="1.3" fill="#cfe0f8"/><rect x="101" y="43.5" width="16.5" height="5.5" fill="#fff"/><circle cx="113" cy="46.2" r="1.3" fill="#cfe0f8"/><rect x="65" y="50.5" width="16.5" height="5.5" fill="#fff"/><circle cx="77" cy="53.2" r="1.3" fill="#cfe0f8"/><rect x="83" y="50.5" width="16.5" height="5.5" fill="#fff"/><circle cx="95" cy="53.2" r="1.3" fill="#cfe0f8"/><rect x="101" y="50.5" width="16.5" height="5.5" fill="#fff"/><circle cx="113" cy="53.2" r="1.3" fill="#cfe0f8"/><rect x="64" y="53" width="56" height="9" fill="#000"/><rect x="71" y="56" width="45" height="0.9" fill="#557"/><rect x="71" y="56" width="20" height="0.9" fill="#4c8fd6"/><rect x="71" y="59.5" width="45" height="0.9" fill="#557"/><rect x="71" y="59.5" width="24" height="0.9" fill="#4c8fd6"/><rect x="45.5" y="66" width="11" height="3.3" fill="#4a90e2"/><rect x="57.5" y="66" width="11.5" height="3.3" fill="#5cb85c"/><rect x="69.5" y="66" width="11" height="3.3" fill="#9a9a9a"/></symbol>
<symbol id="wc" viewBox="0 0 122 72"><rect x="0" y="0" width="122" height="72" fill="#141414"/><rect x="4.5" y="0" width="117.5" height="72" fill="#fff"/><rect x="4.5" y="0" width="117.5" height="3.5" fill="#e9e9ea"/><circle cx="7" cy="1.8" r="0.7" fill="#e55"/><circle cx="9" cy="1.8" r="0.7" fill="#eb3"/><circle cx="11" cy="1.8" r="0.7" fill="#5b5"/><rect x="14" y="0.5" width="18" height="3" fill="#fff"/><rect x="36" y="1.3" width="10" height="1" fill="#b8c8e8"/><rect x="49" y="1.3" width="10" height="1" fill="#b8c8e8"/><rect x="62" y="1.3" width="10" height="1" fill="#b8c8e8"/><rect x="75" y="1.3" width="10" height="1" fill="#b8c8e8"/><rect x="88" y="1.3" width="10" height="1" fill="#b8c8e8"/><rect x="101" y="1.3" width="10" height="1" fill="#b8c8e8"/><rect x="8" y="4.5" width="100" height="1.2" fill="#d8d8d8"/><rect x="7" y="7.2" width="8" height="1" fill="#c8c8c8"/><rect x="19" y="7.2" width="8" height="1" fill="#c8c8c8"/><rect x="31" y="7.2" width="8" height="1" fill="#c8c8c8"/><rect x="43" y="7.2" width="8" height="1" fill="#c8c8c8"/><rect x="55" y="7.2" width="8" height="1" fill="#c8c8c8"/><rect x="67" y="7.2" width="8" height="1" fill="#c8c8c8"/><rect x="79" y="7.2" width="8" height="1" fill="#c8c8c8"/><rect x="91" y="7.2" width="8" height="1" fill="#c8c8c8"/><rect x="103" y="7.2" width="8" height="1" fill="#c8c8c8"/><rect x="6.5" y="11" width="114" height="6.5" fill="#303c58"/><rect x="8" y="13.5" width="18" height="1.3" fill="#aab"/><rect x="95" y="13.5" width="12" height="1.3" fill="#aab"/><rect x="110" y="12" width="4" height="4" fill="#ccd"/><rect x="6.5" y="17.5" width="114" height="1.5" fill="#b5b5b5"/><rect x="7" y="19" width="113" height="43" fill="#000"/><rect x="7.5" y="22" width="55" height="31" fill="#fff"/><rect x="9" y="24.0" width="50" height="0.9" fill="#c4c4c4"/><rect x="9" y="26.3" width="50" height="0.9" fill="#c4c4c4"/><rect x="9" y="28.6" width="50" height="0.9" fill="#c4c4c4"/><rect x="9" y="30.9" width="50" height="0.9" fill="#c4c4c4"/><rect x="9" y="33.2" width="50" height="0.9" fill="#c4c4c4"/><rect x="9" y="35.5" width="50" height="0.9" fill="#c4c4c4"/><rect x="9" y="37.8" width="50" height="0.9" fill="#c4c4c4"/><rect x="64" y="21.5" width="55" height="31.5" fill="#3a3a3a"/><rect x="65" y="27.5" width="16.5" height="5.5" fill="#fff"/><circle cx="77" cy="30.2" r="1.3" fill="#cfe0f8"/><rect x="83" y="27.5" width="16.5" height="5.5" fill="#fff"/><circle cx="95" cy="30.2" r="1.3" fill="#cfe0f8"/><rect x="101" y="27.5" width="16.5" height="5.5" fill="#fff"/><circle cx="113" cy="30.2" r="1.3" fill="#cfe0f8"/><rect x="65" y="34.5" width="16.5" height="5.5" fill="#fff"/><circle cx="77" cy="37.2" r="1.3" fill="#cfe0f8"/><rect x="83" y="34.5" width="16.5" height="5.5" fill="#fff"/><circle cx="95" cy="37.2" r="1.3" fill="#cfe0f8"/><rect x="101" y="34.5" width="16.5" height="5.5" fill="#fff"/><circle cx="113" cy="37.2" r="1.3" fill="#cfe0f8"/><rect x="65" y="41.5" width="16.5" height="5.5" fill="#fff"/><circle cx="77" cy="44.2" r="1.3" fill="#cfe0f8"/><rect x="83" y="41.5" width="16.5" height="5.5" fill="#fff"/><circle cx="95" cy="44.2" r="1.3" fill="#cfe0f8"/><rect x="101" y="41.5" width="16.5" height="5.5" fill="#fff"/><circle cx="113" cy="44.2" r="1.3" fill="#cfe0f8"/><rect x="65" y="48.5" width="16.5" height="5.5" fill="#fff"/><circle cx="77" cy="51.2" r="1.3" fill="#cfe0f8"/><rect x="83" y="48.5" width="16.5" height="5.5" fill="#fff"/><circle cx="95" cy="51.2" r="1.3" fill="#cfe0f8"/><rect x="101" y="48.5" width="16.5" height="5.5" fill="#fff"/><circle cx="113" cy="51.2" r="1.3" fill="#cfe0f8"/><rect x="64" y="53" width="56" height="9" fill="#000"/><rect x="71" y="56" width="45" height="0.9" fill="#557"/><rect x="71" y="56" width="20" height="0.9" fill="#4c8fd6"/><rect x="71" y="59.5" width="45" height="0.9" fill="#557"/><rect x="71" y="59.5" width="24" height="0.9" fill="#4c8fd6"/><rect x="45.5" y="66" width="11" height="3.3" fill="#4a90e2"/><rect x="57.5" y="66" width="11.5" height="3.3" fill="#5cb85c"/><rect x="69.5" y="66" width="11" height="3.3" fill="#9a9a9a"/></symbol>
</defs></svg>
<div class="ab" style="left:67.5px;top:568px;width:472.5px;height:96px;overflow:hidden;border-radius:0 0 5px 5px"><div class="ab" style="left:0;top:72px;width:472.5px;height:24px;background:#214f98"></div><svg class="ab" style="left:0;top:0" width="472.5" height="72"><use href="#d1" x="0" y="0" width="122" height="72"/><use href="#d2" x="122" y="0" width="122" height="72"/><use href="#d2" x="244" y="0" width="122" height="72"/><use href="#d2" x="366" y="0" width="122" height="72"/></svg></div>
<div class="ab" style="left:572.5px;top:568px;width:419.5px;height:96px;overflow:hidden;border-radius:0 0 5px 5px"><div class="ab" style="left:0;top:72px;width:419.5px;height:24px;background:#214f98"></div><svg class="ab" style="left:0;top:0" width="419.5" height="72"><use href="#d3" x="0" y="0" width="122" height="72"/><use href="#wb" x="122" y="0" width="122" height="72"/><use href="#wc" x="244" y="0" width="122" height="72"/><use href="#wc" x="366" y="0" width="122" height="72"/></svg></div>
<div class="ab" style="left:1024.5px;top:568px;width:246.5px;height:96px;overflow:hidden;border-radius:0 0 5px 5px"><div class="ab" style="left:0;top:72px;width:246.5px;height:24px;background:#214f98"></div><svg class="ab" style="left:0;top:0" width="246.5" height="72"><use href="#d3" x="0" y="0" width="122" height="72"/><use href="#d3" x="122" y="0" width="122" height="72"/><use href="#d3" x="244" y="0" width="122" height="72"/></svg></div>
<div class="ab" style="left:41px;top:604px;width:23px;height:19px;border:1.3px solid #8a8a8a;border-radius:3px;background:#3a3a3a"></div><svg class="ab" style="left:41px;top:604px" width="23" height="19"><path d="M5 4.5 L11.5 9.5 L5 14.5Z M18 4.5 L11.5 9.5 L18 14.5Z" fill="#bdbdbd"/></svg>
<div class="ab" style="left:545.5px;top:604px;width:23px;height:19px;border:1.3px solid #8a8a8a;border-radius:3px;background:#3a3a3a"></div><svg class="ab" style="left:545.5px;top:604px" width="23" height="19"><path d="M5 4.5 L11.5 9.5 L5 14.5Z M18 4.5 L11.5 9.5 L18 14.5Z" fill="#bdbdbd"/></svg>
<div class="ab" style="left:997px;top:604px;width:23px;height:19px;border:1.3px solid #8a8a8a;border-radius:3px;background:#3a3a3a"></div><svg class="ab" style="left:997px;top:604px" width="23" height="19"><path d="M5 4.5 L11.5 9.5 L5 14.5Z M18 4.5 L11.5 9.5 L18 14.5Z" fill="#bdbdbd"/></svg>
<div class="ab" style="left:42px;top:536px;width:83px;height:24px;border-radius:3px;background:#5a57d3"></div>
<div class="ab" style="left:67.7px;top:556px;width:3.6px;height:15px;border-radius:0 0 2px 2px;background:#5a57d3"></div>
<div class="t" style="left:44.5px;top:538.5px;font-size:11.5px;color:#f2f2f2">5.6 秒 – 如...</div>
<div class="ab" style="left:127px;top:536px;width:46px;height:24px;border-radius:3px;background:#5a57d3"></div>
<div class="ab" style="left:127.2px;top:556px;width:3.6px;height:15px;border-radius:0 0 2px 2px;background:#5a57d3"></div>
<div class="t" style="left:129.5px;top:538.5px;font-size:11.5px;color:#f2f2f2">3.8...</div>
<div class="ab" style="left:179px;top:536px;width:50.5px;height:24px;border-radius:3px;background:#5a57d3"></div>
<div class="ab" style="left:179.2px;top:556px;width:3.6px;height:15px;border-radius:0 0 2px 2px;background:#5a57d3"></div>
<div class="t" style="left:181.5px;top:538.5px;font-size:11.5px;color:#f2f2f2">4.1 秒...</div>
<div class="ab" style="left:234px;top:536px;width:59px;height:24px;border-radius:3px;background:#5a57d3"></div>
<div class="ab" style="left:234.2px;top:556px;width:3.6px;height:15px;border-radius:0 0 2px 2px;background:#5a57d3"></div>
<div class="t" style="left:236.5px;top:538.5px;font-size:11.5px;color:#f2f2f2">4.8 秒 –...</div>
<div class="ab" style="left:298px;top:536px;width:37.5px;height:24px;border-radius:3px;background:#5a57d3"></div>
<div class="ab" style="left:298.2px;top:556px;width:3.6px;height:15px;border-radius:0 0 2px 2px;background:#5a57d3"></div>
<div class="t" style="left:300.5px;top:538.5px;font-size:11.5px;color:#f2f2f2">3.1...</div>
<div class="ab" style="left:338px;top:536px;width:36px;height:24px;border-radius:3px;background:#5a57d3"></div>
<div class="ab" style="left:337.7px;top:556px;width:3.6px;height:15px;border-radius:0 0 2px 2px;background:#5a57d3"></div>
<div class="t" style="left:340.5px;top:538.5px;font-size:11.5px;color:#f2f2f2">3.0...</div>
<div class="ab" style="left:376px;top:536px;width:64px;height:24px;border-radius:3px;background:#5a57d3"></div>
<div class="ab" style="left:375.7px;top:556px;width:3.6px;height:15px;border-radius:0 0 2px 2px;background:#5a57d3"></div>
<div class="t" style="left:378.5px;top:538.5px;font-size:11.5px;color:#f2f2f2">5.2 秒 –...</div>
<div class="ab" style="left:444.5px;top:536px;width:61.5px;height:24px;border-radius:3px;background:#5a57d3"></div>
<div class="ab" style="left:444.2px;top:556px;width:3.6px;height:15px;border-radius:0 0 2px 2px;background:#5a57d3"></div>
<div class="t" style="left:447.0px;top:538.5px;font-size:11.5px;color:#f2f2f2">5.0 秒 –...</div>
<div class="ab" style="left:509px;top:536px;width:79px;height:24px;border-radius:3px;background:#5a57d3"></div>
<div class="ab" style="left:508.2px;top:556px;width:3.6px;height:15px;border-radius:0 0 2px 2px;background:#5a57d3"></div>
<div class="t" style="left:511.5px;top:538.5px;font-size:11.5px;color:#f2f2f2">5.0 秒 – 文...</div>
<div class="ab" style="left:592px;top:536px;width:43.5px;height:24px;border-radius:3px;background:#5a57d3"></div>
<div class="ab" style="left:592.2px;top:556px;width:3.6px;height:15px;border-radius:0 0 2px 2px;background:#5a57d3"></div>
<div class="t" style="left:594.5px;top:538.5px;font-size:11.5px;color:#f2f2f2">3.7...</div>
<div class="ab" style="left:639px;top:536px;width:47.5px;height:24px;border-radius:3px;background:#5a57d3"></div>
<div class="ab" style="left:639.2px;top:556px;width:3.6px;height:15px;border-radius:0 0 2px 2px;background:#5a57d3"></div>
<div class="t" style="left:641.5px;top:538.5px;font-size:11.5px;color:#f2f2f2">3.9 秒...</div>
<div class="ab" style="left:688.7px;top:536px;width:41.69999999999993px;height:24px;border-radius:3px;background:#5a57d3"></div>
<div class="ab" style="left:688.7px;top:556px;width:3.6px;height:15px;border-radius:0 0 2px 2px;background:#5a57d3"></div>
<div class="t" style="left:691.2px;top:538.5px;font-size:11.5px;color:#f2f2f2">3.5...</div>
<div class="ab" style="left:733.8px;top:536px;width:20.5px;height:24px;border-radius:3px;background:#5a57d3"></div>
<div class="ab" style="left:738.7px;top:556px;width:3.6px;height:15px;border-radius:0 0 2px 2px;background:#5a57d3"></div>
<div class="t" style="left:736.3px;top:538.5px;font-size:11.5px;color:#f2f2f2">1...</div>
<div class="ab" style="left:756px;top:536px;width:39.5px;height:24px;border-radius:3px;background:#5a57d3"></div>
<div class="ab" style="left:773.2px;top:556px;width:3.6px;height:15px;border-radius:0 0 2px 2px;background:#5a57d3"></div>
<div class="t" style="left:758.5px;top:538.5px;font-size:11.5px;color:#f2f2f2">3.3...</div>
<div class="ab" style="left:797.3px;top:536px;width:42.700000000000045px;height:24px;border-radius:3px;background:#5a57d3"></div>
<div class="ab" style="left:801.2px;top:556px;width:3.6px;height:15px;border-radius:0 0 2px 2px;background:#5a57d3"></div>
<div class="t" style="left:799.8px;top:538.5px;font-size:11.5px;color:#f2f2f2">3.5...</div>
<div class="ab" style="left:842px;top:536px;width:37.700000000000045px;height:24px;border-radius:3px;background:#5a57d3"></div>
<div class="ab" style="left:841.2px;top:556px;width:3.6px;height:15px;border-radius:0 0 2px 2px;background:#5a57d3"></div>
<div class="t" style="left:844.5px;top:538.5px;font-size:11.5px;color:#f2f2f2">3.1...</div>
<div class="ab" style="left:881.2px;top:536px;width:28.5px;height:24px;border-radius:3px;background:#5a57d3"></div>
<div class="ab" style="left:880.8000000000001px;top:556px;width:3.6px;height:15px;border-radius:0 0 2px 2px;background:#5a57d3"></div>
<div class="t" style="left:883.7px;top:538.5px;font-size:11.5px;color:#f2f2f2">2....</div>
<div class="ab" style="left:913.6px;top:536px;width:77.89999999999998px;height:24px;border-radius:3px;background:#5a57d3"></div>
<div class="ab" style="left:913.2px;top:556px;width:3.6px;height:15px;border-radius:0 0 2px 2px;background:#5a57d3"></div>
<div class="t" style="left:916.1px;top:538.5px;font-size:11.5px;color:#f2f2f2">6.3 秒 – 例...</div>
<div class="ab" style="left:1008.8px;top:536px;width:63.200000000000045px;height:24px;border-radius:3px;background:#5a57d3"></div>
<div class="ab" style="left:1023.2px;top:556px;width:3.6px;height:15px;border-radius:0 0 2px 2px;background:#5a57d3"></div>
<div class="t" style="left:1011.3px;top:538.5px;font-size:11.5px;color:#f2f2f2">4.4 秒 –...</div>
<div class="ab" style="left:1075.4px;top:536px;width:50.09999999999991px;height:24px;border-radius:3px;background:#5a57d3"></div>
<div class="ab" style="left:1077.7px;top:556px;width:3.6px;height:15px;border-radius:0 0 2px 2px;background:#5a57d3"></div>
<div class="t" style="left:1077.9px;top:538.5px;font-size:11.5px;color:#f2f2f2">4.1 秒...</div>
<div class="ab" style="left:1127px;top:536px;width:27.700000000000045px;height:24px;border-radius:3px;background:#5a57d3"></div>
<div class="ab" style="left:1128.7px;top:556px;width:3.6px;height:15px;border-radius:0 0 2px 2px;background:#5a57d3"></div>
<div class="t" style="left:1129.5px;top:538.5px;font-size:11.5px;color:#f2f2f2">2....</div>
<div class="ab" style="left:1156.5px;top:536px;width:32.5px;height:24px;border-radius:3px;background:#5a57d3"></div>
<div class="ab" style="left:1166.0px;top:556px;width:3.6px;height:15px;border-radius:0 0 2px 2px;background:#5a57d3"></div>
<div class="t" style="left:1159.0px;top:538.5px;font-size:11.5px;color:#f2f2f2">2.7...</div>
<div class="ab" style="left:1190.5px;top:536px;width:70.90000000000009px;height:24px;border-radius:3px;background:#5a57d3"></div>
<div class="ab" style="left:1190.5px;top:556px;width:3.6px;height:15px;border-radius:0 0 2px 2px;background:#5a57d3"></div>
<div class="t" style="left:1193.0px;top:538.5px;font-size:11.5px;color:#f2f2f2">5.8 秒 –...</div>
<div class="ab" style="left:1263px;top:536px;width:8px;height:24px;border-radius:3px;background:#5a57d3"></div>
<div class="ab" style="left:1263.0px;top:556px;width:3.6px;height:15px;border-radius:0 0 2px 2px;background:#5a57d3"></div>
<div class="ab" style="left:47px;top:672px;width:493px;height:4px;background:#262626"></div>
<div class="ab" style="left:588px;top:672px;width:404px;height:4px;background:#262626"></div>
<div class="ab" style="left:1015px;top:672px;width:256px;height:4px;background:#262626"></div>
<div class="ab" style="left:40px;top:676px;width:537.5px;height:50px;border-radius:3px 3px 0 0;background:#2a9453;overflow:hidden"><svg class="ab" style="left:0;top:29px" width="537.5" height="21"><path d="M1.5 21V18.9M2.5 21V19.1M3.5 21V20.4M4.5 21V19.8M5.5 21V19.9M6.5 21V19.4M7.5 21V19.0M10.5 21V18.9M11.5 21V19.9M12.5 21V19.1M13.5 21V15.6M14.5 21V19.9M15.5 21V19.2M16.5 21V17.1M17.5 21V18.6M18.5 21V14.3M19.5 21V19.4M20.5 21V19.9M21.5 21V15.2M22.5 21V18.6M23.5 21V18.3M24.5 21V20.5M25.5 21V15.5M27.5 21V20.4M28.5 21V9.9M29.5 21V8.0M30.5 21V17.1M31.5 21V11.8M32.5 21V17.6M33.5 21V12.6M34.5 21V18.3M36.5 21V18.9M37.5 21V19.6M38.5 21V14.5M40.5 21V18.5M41.5 21V15.9M43.5 21V20.2M44.5 21V19.2M45.5 21V19.2M46.5 21V15.4M47.5 21V19.9M48.5 21V18.9M49.5 21V19.3M50.5 21V9.3M51.5 21V8.9M52.5 21V18.8M53.5 21V11.1M54.5 21V19.7M55.5 21V12.0M56.5 21V13.0M57.5 21V15.5M58.5 21V15.0M59.5 21V20.0M61.5 21V19.6M62.5 21V19.2M63.5 21V19.3M64.5 21V20.1M65.5 21V19.9M66.5 21V19.7M67.5 21V19.1M68.5 21V17.9M69.5 21V5.7M70.5 21V15.9M71.5 21V14.9M73.5 21V19.2M74.5 21V14.4M75.5 21V11.7M76.5 21V11.2M77.5 21V16.7M78.5 21V19.0M79.5 21V9.5M80.5 21V16.3M81.5 21V14.3M82.5 21V18.8M83.5 21V20.4M84.5 21V19.7M85.5 21V16.8M86.5 21V19.6M87.5 21V19.9M88.5 21V20.3M89.5 21V16.9M90.5 21V18.6M92.5 21V19.0M93.5 21V18.9M94.5 21V17.7M95.5 21V19.1M96.5 21V18.0M97.5 21V2.4M98.5 21V4.0M99.5 21V4.1M100.5 21V19.2M101.5 21V16.4M102.5 21V6.7M103.5 21V19.8M104.5 21V14.2M105.5 21V15.4M106.5 21V19.1M107.5 21V16.0M108.5 21V11.5M109.5 21V8.5M110.5 21V19.5M111.5 21V14.3M112.5 21V20.2M113.5 21V17.7M114.5 21V14.2M115.5 21V18.3M116.5 21V18.8M117.5 21V13.5M118.5 21V13.3M119.5 21V12.8M120.5 21V20.4M121.5 21V18.9M122.5 21V19.3M124.5 21V15.7M126.5 21V19.1M127.5 21V20.4M129.5 21V17.1M130.5 21V17.3M131.5 21V14.9M133.5 21V19.7M135.5 21V20.3M136.5 21V19.2M137.5 21V19.9M138.5 21V7.9M139.5 21V7.6M140.5 21V6.8M141.5 21V9.6M142.5 21V7.6M143.5 21V7.7M144.5 21V9.8M145.5 21V18.8M146.5 21V19.7M147.5 21V20.5M148.5 21V19.5M149.5 21V19.0M152.5 21V15.6M153.5 21V19.2M155.5 21V18.5M156.5 21V19.3M157.5 21V16.0M158.5 21V15.3M159.5 21V13.0M160.5 21V13.7M161.5 21V19.1M162.5 21V13.1M163.5 21V16.6M164.5 21V20.0M165.5 21V19.6M166.5 21V20.2M167.5 21V19.4M169.5 21V20.3M170.5 21V16.6M171.5 21V18.8M172.5 21V14.5M173.5 21V16.5M174.5 21V9.2M175.5 21V18.7M176.5 21V13.3M177.5 21V14.8M178.5 21V20.4M180.5 21V10.9M181.5 21V12.7M182.5 21V7.4M183.5 21V13.2M184.5 21V3.8M185.5 21V16.3M186.5 21V8.3M187.5 21V18.6M188.5 21V19.2M189.5 21V19.7M190.5 21V20.1M191.5 21V20.1M192.5 21V20.5M193.5 21V19.3M194.5 21V19.9M195.5 21V12.1M196.5 21V15.4M197.5 21V14.8M198.5 21V4.6M199.5 21V5.5M200.5 21V10.1M201.5 21V5.4M202.5 21V4.8M203.5 21V6.5M204.5 21V20.5M205.5 21V20.2M206.5 21V18.5M207.5 21V19.0M208.5 21V19.4M209.5 21V10.3M210.5 21V12.7M211.5 21V17.6M212.5 21V18.7M213.5 21V13.1M214.5 21V10.9M215.5 21V17.2M216.5 21V19.8M217.5 21V18.5M218.5 21V20.4M219.5 21V19.2M221.5 21V18.0M222.5 21V18.7M223.5 21V7.1M224.5 21V15.9M225.5 21V11.1M226.5 21V9.2M227.5 21V19.4M228.5 21V20.1M229.5 21V20.3M230.5 21V18.8M231.5 21V16.2M232.5 21V18.6M233.5 21V18.1M234.5 21V7.9M235.5 21V9.9M236.5 21V19.6M237.5 21V17.7M238.5 21V11.0M239.5 21V6.6M240.5 21V15.4M241.5 21V10.0M242.5 21V19.4M243.5 21V10.7M244.5 21V19.0M245.5 21V16.9M246.5 21V9.9M247.5 21V18.7M248.5 21V15.3M249.5 21V16.5M250.5 21V18.8M251.5 21V19.6M252.5 21V18.7M253.5 21V19.9M254.5 21V20.3M255.5 21V1.7M256.5 21V16.3M257.5 21V11.4M258.5 21V13.4M259.5 21V6.7M260.5 21V4.8M261.5 21V16.9M262.5 21V16.2M263.5 21V20.4M264.5 21V16.2M265.5 21V19.9M268.5 21V20.4M269.5 21V19.1M271.5 21V18.7M272.5 21V20.1M273.5 21V18.6M274.5 21V18.7M275.5 21V10.1M276.5 21V5.9M277.5 21V18.1M278.5 21V12.4M279.5 21V14.6M280.5 21V19.1M281.5 21V7.8M282.5 21V18.5M283.5 21V20.3M284.5 21V17.6M285.5 21V17.9M286.5 21V12.3M287.5 21V6.3M288.5 21V14.7M289.5 21V6.2M290.5 21V17.3M291.5 21V8.0M292.5 21V20.5M293.5 21V19.5M294.5 21V18.6M295.5 21V18.7M296.5 21V13.3M297.5 21V14.4M298.5 21V20.2M299.5 21V19.6M300.5 21V13.8M301.5 21V19.8M302.5 21V18.1M303.5 21V18.8M304.5 21V18.5M305.5 21V19.9M306.5 21V19.4M307.5 21V19.4M308.5 21V18.6M309.5 21V20.0M310.5 21V20.2M311.5 21V20.2M312.5 21V20.2M313.5 21V18.9M314.5 21V18.8M315.5 21V20.2M316.5 21V20.2M317.5 21V18.8M318.5 21V12.0M319.5 21V18.6M320.5 21V20.3M321.5 21V16.1M322.5 21V11.4M323.5 21V18.7M324.5 21V19.6M325.5 21V14.3M326.5 21V13.8M327.5 21V19.4M328.5 21V20.3M329.5 21V19.0M330.5 21V19.8M331.5 21V18.8M332.5 21V16.1M333.5 21V19.7M334.5 21V19.0M336.5 21V15.0M338.5 21V17.5M339.5 21V18.5M340.5 21V18.9M341.5 21V14.3M342.5 21V9.4M343.5 21V15.6M344.5 21V11.1M345.5 21V13.8M346.5 21V18.8M348.5 21V10.3M349.5 21V9.3M350.5 21V6.9M351.5 21V6.4M352.5 21V11.4M353.5 21V12.5M354.5 21V7.9M355.5 21V12.1M356.5 21V7.5M357.5 21V11.8M358.5 21V19.9M360.5 21V19.2M361.5 21V18.6M362.5 21V19.5M363.5 21V8.4M364.5 21V13.9M365.5 21V7.9M366.5 21V16.7M367.5 21V10.0M368.5 21V4.0M369.5 21V19.9M370.5 21V20.0M371.5 21V20.2M372.5 21V20.4M373.5 21V17.3M374.5 21V14.6M375.5 21V16.3M376.5 21V17.8M377.5 21V13.8M378.5 21V10.3M379.5 21V20.2M380.5 21V11.4M381.5 21V17.4M382.5 21V12.2M383.5 21V19.2M384.5 21V13.7M385.5 21V15.2M386.5 21V16.6M387.5 21V8.2M388.5 21V6.7M389.5 21V14.5M390.5 21V8.8M391.5 21V8.5M392.5 21V1.9M393.5 21V19.2M394.5 21V4.8M395.5 21V18.1M396.5 21V14.5M397.5 21V18.6M398.5 21V19.6M399.5 21V19.0M400.5 21V17.6M401.5 21V6.6M402.5 21V8.8M403.5 21V5.8M404.5 21V14.1M406.5 21V8.9M407.5 21V7.0M408.5 21V17.2M409.5 21V9.0M410.5 21V2.5M411.5 21V12.0M412.5 21V16.9M413.5 21V14.2M414.5 21V18.1M415.5 21V19.2M416.5 21V1.8M417.5 21V17.7M418.5 21V10.5M419.5 21V11.9M420.5 21V13.6M421.5 21V5.8M422.5 21V2.4M423.5 21V7.4M424.5 21V8.0M425.5 21V8.2M426.5 21V9.0M428.5 21V15.8M429.5 21V19.2M430.5 21V20.1M431.5 21V19.7M432.5 21V11.2M433.5 21V18.7M434.5 21V19.0M435.5 21V13.7M436.5 21V9.5M437.5 21V10.5M438.5 21V12.6M439.5 21V18.7M440.5 21V18.6M442.5 21V19.1M443.5 21V18.9M444.5 21V15.4M445.5 21V19.2M446.5 21V18.1M447.5 21V17.1M448.5 21V17.9M449.5 21V15.7M450.5 21V19.0M451.5 21V19.3M452.5 21V18.1M453.5 21V20.2M454.5 21V16.9M455.5 21V18.7M456.5 21V18.6M458.5 21V17.7M459.5 21V17.6M460.5 21V19.7M461.5 21V20.3M462.5 21V20.4M463.5 21V18.0M465.5 21V17.5M466.5 21V19.9M468.5 21V19.4M469.5 21V12.1M470.5 21V9.7M471.5 21V17.4M472.5 21V19.6M473.5 21V8.3M474.5 21V16.6M475.5 21V8.6M476.5 21V5.8M477.5 21V11.9M478.5 21V19.0M479.5 21V7.8M480.5 21V11.8M481.5 21V19.6M482.5 21V14.5M483.5 21V18.9M484.5 21V19.1M485.5 21V19.6M486.5 21V18.4M487.5 21V20.3M489.5 21V19.0M491.5 21V19.1M492.5 21V19.6M493.5 21V18.6M494.5 21V14.8M495.5 21V14.5M496.5 21V17.1M497.5 21V17.9M498.5 21V14.8M499.5 21V13.8M500.5 21V18.4M501.5 21V19.0M502.5 21V19.7M503.5 21V14.6M504.5 21V13.5M505.5 21V13.7M506.5 21V16.5M507.5 21V20.0M508.5 21V19.0M509.5 21V19.3M510.5 21V19.8M511.5 21V18.8M512.5 21V20.1M513.5 21V20.5M515.5 21V7.4M516.5 21V10.7M517.5 21V9.9M518.5 21V13.0M519.5 21V16.4M520.5 21V8.9M521.5 21V15.4M522.5 21V8.4M523.5 21V14.3M524.5 21V8.8M525.5 21V15.3M526.5 21V15.9M528.5 21V19.4M529.5 21V19.7M530.5 21V20.1M532.5 21V20.0M533.5 21V16.1M534.5 21V16.9M535.5 21V14.7M536.5 21V13.5" stroke="#4cd083" stroke-width="1" fill="none"/></svg><div class="ab" style="left:0;top:38px;width:537.5px;height:12px;background:linear-gradient(rgba(25,80,45,0) 0%,rgba(25,80,45,.7) 100%)"></div><div class="ab" style="left:0;top:29px;width:537.5px;height:1px;background:#7bd69c"></div><div class="ab" style="left:95px;top:22px;width:1.2px;height:7px;background:#dcbc3c;border-radius:1px 1px 0 0"></div><div class="ab" style="left:143px;top:22px;width:1.2px;height:7px;background:#dcbc3c;border-radius:1px 1px 0 0"></div><div class="ab" style="left:189px;top:22px;width:1.2px;height:7px;background:#dcbc3c;border-radius:1px 1px 0 0"></div><div class="ab" style="left:290px;top:22px;width:1.2px;height:7px;background:#dcbc3c;border-radius:1px 1px 0 0"></div><div class="ab" style="left:354px;top:22px;width:1.2px;height:7px;background:#dcbc3c;border-radius:1px 1px 0 0"></div><div class="ab" style="left:412px;top:22px;width:1.2px;height:7px;background:#dcbc3c;border-radius:1px 1px 0 0"></div><div class="t" style="left:2.8px;top:2px;font-size:11.6px;color:#f0f0f0">40.2 秒 – 第一部分</div></div><div class="ab" style="left:296px;top:705px;width:27px;height:20px;border-radius:3px;background:linear-gradient(#f2f2f2,#bdbdbd)"></div><svg class="ab" style="left:298px;top:707px" width="24" height="16"><path d="M3 11 Q5 3 12 3 Q17 3 18 8 L21 6.5 Q23.5 6.5 23 9 L19 10.5 L18 13.5 H15.5 L15.2 11.5 H9 L8.5 13.5 H6 L6.2 11.8 Q4 12 2 13 Z" fill="#2a2a2a"/></svg><div class="ab" style="left:556.8px;top:668px;width:13px;height:13px;border-radius:7px;background:#cfcfcf"></div><div class="ab" style="left:561.3px;top:672.5px;width:4px;height:4px;border-radius:2px;background:#555"></div>
<div class="ab" style="left:584px;top:676px;width:325px;height:50px;border-radius:3px 3px 0 0;background:#2a9453;overflow:hidden"><svg class="ab" style="left:0;top:29px" width="325" height="21"><path d="M0.5 21V18.6M1.5 21V14.9M2.5 21V15.3M3.5 21V15.0M4.5 21V18.9M5.5 21V19.2M6.5 21V19.3M7.5 21V20.2M8.5 21V11.7M9.5 21V8.9M10.5 21V19.1M12.5 21V19.9M13.5 21V20.0M14.5 21V19.2M15.5 21V18.5M16.5 21V18.6M17.5 21V19.6M18.5 21V19.9M19.5 21V15.5M20.5 21V17.6M21.5 21V20.1M22.5 21V14.3M23.5 21V8.0M24.5 21V16.7M25.5 21V14.6M26.5 21V16.6M27.5 21V15.8M28.5 21V9.6M30.5 21V20.2M31.5 21V14.9M32.5 21V19.7M33.5 21V18.5M34.5 21V19.3M35.5 21V14.6M36.5 21V9.8M37.5 21V10.7M38.5 21V13.2M39.5 21V17.4M40.5 21V18.2M41.5 21V19.0M42.5 21V20.1M43.5 21V17.3M44.5 21V15.1M45.5 21V15.5M46.5 21V15.0M47.5 21V12.6M48.5 21V4.8M49.5 21V13.3M50.5 21V18.4M51.5 21V8.2M52.5 21V19.7M53.5 21V14.6M54.5 21V20.1M55.5 21V18.3M56.5 21V18.8M57.5 21V19.8M58.5 21V19.6M59.5 21V18.7M60.5 21V19.2M61.5 21V19.8M62.5 21V20.4M63.5 21V20.2M64.5 21V19.3M66.5 21V18.7M67.5 21V8.0M68.5 21V16.8M69.5 21V15.3M70.5 21V9.1M71.5 21V18.6M72.5 21V7.9M73.5 21V19.4M74.5 21V19.4M75.5 21V12.3M76.5 21V20.2M77.5 21V11.6M78.5 21V17.0M79.5 21V18.1M80.5 21V14.2M81.5 21V19.3M82.5 21V17.8M83.5 21V10.3M84.5 21V18.7M86.5 21V19.1M88.5 21V19.4M89.5 21V20.3M90.5 21V20.4M91.5 21V18.8M92.5 21V16.7M93.5 21V18.4M94.5 21V17.9M95.5 21V15.3M96.5 21V16.9M97.5 21V18.8M98.5 21V6.3M99.5 21V12.3M100.5 21V3.8M101.5 21V11.2M102.5 21V9.6M103.5 21V18.8M104.5 21V11.9M105.5 21V8.6M106.5 21V12.2M107.5 21V13.9M108.5 21V17.1M109.5 21V20.4M110.5 21V19.0M111.5 21V19.0M112.5 21V15.8M113.5 21V5.9M114.5 21V19.8M115.5 21V18.6M116.5 21V15.0M117.5 21V17.8M118.5 21V18.1M119.5 21V8.8M120.5 21V18.8M121.5 21V1.7M122.5 21V14.5M123.5 21V20.2M124.5 21V16.5M125.5 21V19.9M126.5 21V9.0M127.5 21V16.5M128.5 21V13.8M129.5 21V17.7M130.5 21V16.1M131.5 21V19.2M132.5 21V19.0M133.5 21V20.1M134.5 21V19.0M135.5 21V17.6M136.5 21V15.2M137.5 21V12.4M138.5 21V11.8M139.5 21V14.1M140.5 21V16.4M141.5 21V11.7M142.5 21V14.9M144.5 21V18.6M145.5 21V20.4M146.5 21V19.5M147.5 21V20.0M149.5 21V19.6M152.5 21V17.6M153.5 21V15.0M154.5 21V19.6M155.5 21V18.5M156.5 21V19.7M157.5 21V16.9M158.5 21V9.0M159.5 21V12.4M160.5 21V8.7M161.5 21V6.1M162.5 21V17.4M163.5 21V19.5M164.5 21V19.4M165.5 21V19.0M166.5 21V19.2M167.5 21V5.2M168.5 21V18.5M169.5 21V16.4M170.5 21V8.1M171.5 21V7.5M172.5 21V13.5M173.5 21V19.4M174.5 21V6.5M175.5 21V10.9M176.5 21V19.7M178.5 21V20.4M179.5 21V16.9M180.5 21V19.7M181.5 21V19.8M182.5 21V20.2M183.5 21V13.9M184.5 21V13.8M185.5 21V15.5M186.5 21V13.4M187.5 21V16.9M188.5 21V19.9M189.5 21V19.7M190.5 21V19.5M192.5 21V20.0M193.5 21V19.7M196.5 21V19.0M197.5 21V17.9M198.5 21V17.9M199.5 21V18.5M200.5 21V19.5M201.5 21V20.3M202.5 21V16.1M203.5 21V16.0M204.5 21V16.1M205.5 21V19.3M207.5 21V17.5M208.5 21V18.9M209.5 21V19.3M211.5 21V19.9M212.5 21V20.0M213.5 21V15.0M214.5 21V17.4M215.5 21V17.0M216.5 21V10.7M217.5 21V17.4M218.5 21V16.6M219.5 21V18.7M221.5 21V14.3M222.5 21V15.5M223.5 21V19.6M224.5 21V8.6M225.5 21V15.3M226.5 21V19.1M227.5 21V15.7M228.5 21V12.4M229.5 21V17.8M230.5 21V20.0M231.5 21V18.9M232.5 21V13.2M233.5 21V18.5M234.5 21V18.2M235.5 21V5.5M236.5 21V19.1M237.5 21V12.7M238.5 21V19.2M239.5 21V10.8M240.5 21V17.4M241.5 21V19.9M242.5 21V19.0M243.5 21V20.3M244.5 21V15.1M245.5 21V19.8M246.5 21V18.6M247.5 21V19.0M248.5 21V17.3M249.5 21V15.6M250.5 21V20.3M251.5 21V16.3M252.5 21V19.8M253.5 21V20.4M254.5 21V16.0M255.5 21V19.3M256.5 21V18.7M257.5 21V17.8M258.5 21V19.0M260.5 21V16.8M261.5 21V11.3M262.5 21V18.7M263.5 21V8.3M264.5 21V19.0M265.5 21V4.7M266.5 21V10.7M267.5 21V17.1M268.5 21V11.8M269.5 21V1.1M270.5 21V3.0M271.5 21V13.7M272.5 21V18.4M273.5 21V14.2M274.5 21V19.9M275.5 21V19.7M277.5 21V19.6M278.5 21V18.6M279.5 21V19.1M280.5 21V16.9M281.5 21V19.7M282.5 21V16.8M283.5 21V20.4M284.5 21V17.0M285.5 21V19.8M286.5 21V14.4M287.5 21V20.0M288.5 21V18.5M289.5 21V19.0M290.5 21V19.6M292.5 21V19.9M294.5 21V10.4M295.5 21V4.0M296.5 21V18.8M297.5 21V11.4M298.5 21V10.9M299.5 21V13.9M300.5 21V19.2M301.5 21V18.7M302.5 21V19.2M303.5 21V19.8M304.5 21V15.7M305.5 21V20.2M306.5 21V19.1M307.5 21V19.4M308.5 21V19.1M309.5 21V18.9M310.5 21V20.4M311.5 21V19.4M312.5 21V16.7M313.5 21V17.5M314.5 21V16.5M315.5 21V12.0M316.5 21V9.3M317.5 21V11.5M318.5 21V15.1M319.5 21V15.6M320.5 21V13.8M321.5 21V19.0M323.5 21V15.5M324.5 21V8.1" stroke="#4cd083" stroke-width="1" fill="none"/></svg><div class="ab" style="left:0;top:38px;width:325px;height:12px;background:linear-gradient(rgba(25,80,45,0) 0%,rgba(25,80,45,.7) 100%)"></div><div class="ab" style="left:0;top:29px;width:325px;height:1px;background:#7bd69c"></div><div class="ab" style="left:136px;top:22px;width:1.2px;height:7px;background:#dcbc3c;border-radius:1px 1px 0 0"></div><div class="ab" style="left:244px;top:22px;width:1.2px;height:7px;background:#dcbc3c;border-radius:1px 1px 0 0"></div><div class="t" style="left:2.8px;top:2px;font-size:11.6px;color:#f0f0f0">26.0 秒 – 第二部分</div></div><div class="ab" style="left:733px;top:705px;width:27px;height:20px;border-radius:3px;background:linear-gradient(#f2f2f2,#bdbdbd)"></div><svg class="ab" style="left:735px;top:707px" width="24" height="16"><path d="M3 11 Q5 3 12 3 Q17 3 18 8 L21 6.5 Q23.5 6.5 23 9 L19 10.5 L18 13.5 H15.5 L15.2 11.5 H9 L8.5 13.5 H6 L6.2 11.8 Q4 12 2 13 Z" fill="#2a2a2a"/></svg><div class="ab" style="left:888.2px;top:668px;width:13px;height:13px;border-radius:7px;background:#cfcfcf"></div><div class="ab" style="left:892.7px;top:672.5px;width:4px;height:4px;border-radius:2px;background:#555"></div>
<div class="ab" style="left:922px;top:671.5px;width:79px;height:54.5px;border-radius:3px 3px 0 0;background:#2a9453;overflow:hidden"><svg class="ab" style="left:0;top:33.5px" width="79" height="21"><path d="M0.5 21V20.4M1.5 21V19.6M2.5 21V20.1M3.5 21V6.6M4.5 21V6.1M5.5 21V17.1M6.5 21V17.5M7.5 21V11.3M8.5 21V6.0M9.5 21V16.5M10.5 21V16.2M11.5 21V18.9M12.5 21V8.2M13.5 21V16.0M14.5 21V8.1M16.5 21V14.1M17.5 21V18.8M18.5 21V19.7M19.5 21V19.1M20.5 21V19.3M22.5 21V19.1M23.5 21V19.5M24.5 21V20.2M26.5 21V18.8M27.5 21V19.8M28.5 21V19.2M29.5 21V16.3M30.5 21V14.6M31.5 21V17.7M32.5 21V17.3M33.5 21V17.8M34.5 21V17.2M35.5 21V14.6M36.5 21V17.9M38.5 21V18.7M39.5 21V13.5M40.5 21V10.8M41.5 21V17.0M42.5 21V16.2M43.5 21V10.3M44.5 21V10.9M45.5 21V19.1M46.5 21V11.8M47.5 21V4.9M48.5 21V10.4M49.5 21V17.6M50.5 21V19.3M51.5 21V13.4M52.5 21V17.1M53.5 21V18.5M54.5 21V11.9M55.5 21V17.6M56.5 21V6.0M57.5 21V17.6M58.5 21V18.7M59.5 21V19.6M60.5 21V8.6M61.5 21V14.9M62.5 21V12.3M63.5 21V17.2M64.5 21V13.3M65.5 21V19.8M66.5 21V15.6M67.5 21V18.5M69.5 21V19.0M70.5 21V20.0M71.5 21V9.5M72.5 21V12.3M73.5 21V16.3M74.5 21V15.4M75.5 21V17.2M76.5 21V19.2M77.5 21V11.0M78.5 21V16.3" stroke="#4cd083" stroke-width="1" fill="none"/></svg><div class="ab" style="left:0;top:42.5px;width:79px;height:12px;background:linear-gradient(rgba(25,80,45,0) 0%,rgba(25,80,45,.7) 100%)"></div><div class="ab" style="left:0;top:29px;width:79px;height:1px;background:#7bd69c"></div><div class="t" style="left:2.8px;top:2px;font-size:11.6px;color:#f0f0f0">5.8 秒 – 第六</div></div>
<div class="ab" style="left:1010px;top:676px;width:261px;height:50px;border-radius:3px 3px 0 0;background:#2a9453;overflow:hidden"><svg class="ab" style="left:0;top:29px" width="261" height="21"><path d="M0.5 21V20.4M2.5 21V20.0M3.5 21V18.3M4.5 21V14.5M5.5 21V20.0M6.5 21V18.7M7.5 21V6.3M8.5 21V16.3M9.5 21V15.7M10.5 21V18.3M11.5 21V6.7M12.5 21V12.0M13.5 21V13.3M14.5 21V9.2M15.5 21V18.7M16.5 21V18.9M17.5 21V14.1M18.5 21V12.8M19.5 21V6.2M20.5 21V9.6M21.5 21V5.6M22.5 21V9.1M23.5 21V11.5M24.5 21V7.4M25.5 21V16.6M26.5 21V5.4M27.5 21V15.0M28.5 21V11.8M29.5 21V6.1M30.5 21V9.9M31.5 21V16.5M32.5 21V18.7M33.5 21V18.8M34.5 21V19.6M35.5 21V20.2M36.5 21V18.7M37.5 21V13.2M38.5 21V11.2M39.5 21V5.5M40.5 21V14.1M41.5 21V14.4M42.5 21V11.5M43.5 21V11.3M44.5 21V12.2M45.5 21V15.7M46.5 21V18.4M47.5 21V19.9M48.5 21V18.8M49.5 21V19.1M50.5 21V12.1M51.5 21V12.5M52.5 21V13.8M53.5 21V20.1M54.5 21V18.5M56.5 21V20.0M57.5 21V20.5M58.5 21V18.5M59.5 21V18.7M60.5 21V12.5M61.5 21V15.2M62.5 21V15.5M63.5 21V15.3M64.5 21V18.7M65.5 21V19.5M66.5 21V17.4M67.5 21V11.0M68.5 21V10.5M69.5 21V13.3M70.5 21V14.1M71.5 21V20.2M72.5 21V18.2M73.5 21V19.9M75.5 21V19.3M76.5 21V18.8M77.5 21V11.6M78.5 21V19.2M79.5 21V18.6M80.5 21V17.8M81.5 21V12.2M82.5 21V9.8M83.5 21V13.7M84.5 21V10.9M85.5 21V10.7M86.5 21V17.4M87.5 21V11.9M88.5 21V12.1M89.5 21V15.1M90.5 21V19.7M91.5 21V14.8M92.5 21V20.0M93.5 21V18.6M94.5 21V15.8M98.5 21V19.0M99.5 21V20.1M100.5 21V20.3M102.5 21V18.5M103.5 21V15.4M104.5 21V20.5M106.5 21V15.1M108.5 21V19.2M109.5 21V17.2M110.5 21V16.5M111.5 21V3.0M112.5 21V4.5M113.5 21V2.6M114.5 21V19.8M115.5 21V8.8M116.5 21V17.4M117.5 21V16.9M118.5 21V7.9M119.5 21V19.8M120.5 21V20.4M121.5 21V16.5M122.5 21V16.0M123.5 21V8.8M124.5 21V6.6M125.5 21V8.5M126.5 21V13.7M127.5 21V17.8M128.5 21V19.7M129.5 21V4.4M130.5 21V3.3M131.5 21V16.4M132.5 21V7.3M133.5 21V18.8M136.5 21V17.7M137.5 21V19.6M138.5 21V18.5M139.5 21V10.4M140.5 21V5.9M141.5 21V17.4M142.5 21V17.8M143.5 21V11.5M144.5 21V19.8M145.5 21V17.7M146.5 21V16.5M147.5 21V4.1M148.5 21V18.4M149.5 21V0.9M150.5 21V15.7M151.5 21V10.5M152.5 21V8.5M153.5 21V2.5M154.5 21V18.9M155.5 21V4.1M156.5 21V17.5M157.5 21V15.2M158.5 21V20.3M159.5 21V9.7M160.5 21V9.0M161.5 21V7.6M162.5 21V4.7M163.5 21V18.4M164.5 21V9.3M165.5 21V19.6M166.5 21V18.8M168.5 21V18.6M169.5 21V19.3M172.5 21V19.4M173.5 21V19.6M174.5 21V19.1M175.5 21V17.6M176.5 21V18.1M177.5 21V17.5M178.5 21V18.7M180.5 21V17.9M181.5 21V16.3M182.5 21V12.1M183.5 21V13.3M184.5 21V10.6M185.5 21V16.1M186.5 21V6.9M187.5 21V18.1M188.5 21V2.5M189.5 21V10.7M190.5 21V15.4M191.5 21V19.1M192.5 21V9.1M193.5 21V19.7M196.5 21V18.6M197.5 21V19.8M198.5 21V17.6M199.5 21V19.5M200.5 21V13.9M201.5 21V17.1M202.5 21V18.6M203.5 21V14.8M204.5 21V14.4M205.5 21V18.9M206.5 21V14.6M207.5 21V18.6M208.5 21V12.8M209.5 21V15.3M210.5 21V19.0M211.5 21V20.2M212.5 21V20.4M213.5 21V19.8M214.5 21V18.2M217.5 21V19.3M218.5 21V15.5M219.5 21V19.4M220.5 21V11.9M221.5 21V15.6M222.5 21V17.6M223.5 21V10.5M224.5 21V13.6M225.5 21V20.1M226.5 21V11.9M227.5 21V18.9M228.5 21V19.1M229.5 21V19.0M231.5 21V18.8M233.5 21V16.5M234.5 21V19.8M235.5 21V15.2M236.5 21V10.8M237.5 21V10.9M238.5 21V8.0M239.5 21V8.3M240.5 21V19.7M241.5 21V17.9M242.5 21V10.4M243.5 21V17.9M244.5 21V18.2M245.5 21V9.7M246.5 21V9.1M247.5 21V18.9M248.5 21V18.7M249.5 21V16.9M250.5 21V17.7M251.5 21V11.3M252.5 21V13.4M253.5 21V12.8M254.5 21V10.3M255.5 21V18.7M256.5 21V14.6M257.5 21V18.7M258.5 21V19.0M259.5 21V18.8M260.5 21V19.0" stroke="#4cd083" stroke-width="1" fill="none"/></svg><div class="ab" style="left:0;top:38px;width:261px;height:12px;background:linear-gradient(rgba(25,80,45,0) 0%,rgba(25,80,45,.7) 100%)"></div><div class="ab" style="left:0;top:29px;width:261px;height:1px;background:#7bd69c"></div><div class="ab" style="left:19px;top:22px;width:1.2px;height:7px;background:#dcbc3c;border-radius:1px 1px 0 0"></div><div class="ab" style="left:52px;top:22px;width:1.2px;height:7px;background:#dcbc3c;border-radius:1px 1px 0 0"></div><div class="ab" style="left:71px;top:22px;width:1.2px;height:7px;background:#dcbc3c;border-radius:1px 1px 0 0"></div><div class="ab" style="left:113px;top:22px;width:1.2px;height:7px;background:#dcbc3c;border-radius:1px 1px 0 0"></div><div class="t" style="left:2.8px;top:2px;font-size:11.6px;color:#f0f0f0">31.2 秒 – 第三部分</div></div><div class="ab" style="left:1127px;top:705px;width:27px;height:20px;border-radius:3px;background:linear-gradient(#f2f2f2,#bdbdbd)"></div><svg class="ab" style="left:1129px;top:707px" width="24" height="16"><path d="M3 11 Q5 3 12 3 Q17 3 18 8 L21 6.5 Q23.5 6.5 23 9 L19 10.5 L18 13.5 H15.5 L15.2 11.5 H9 L8.5 13.5 H6 L6.2 11.8 Q4 12 2 13 Z" fill="#2a2a2a"/></svg>
<div class="ab" style="left:67.5px;top:660px;width:4px;height:17px;border-radius:2px 2px 0 0;background:#2a9553"></div>
<div class="ab" style="left:584px;top:660px;width:4px;height:17px;border-radius:2px 2px 0 0;background:#2a9553"></div>
<div class="ab" style="left:922px;top:660px;width:4px;height:17px;border-radius:2px 2px 0 0;background:#2a9553"></div>
<div class="ab" style="left:1024.5px;top:660px;width:4px;height:17px;border-radius:2px 2px 0 0;background:#2a9553"></div>
<div class="ab" style="left:40px;top:728px;width:1231px;height:25.5px;border:1px dashed #252525;border-right:none;border-radius:4px 0 0 4px"></div>
<svg class="ab" style="left:50px;top:733px" width="12" height="15"><path d="M3.5 11.5 V2.8 L10.5 1 V9.8" stroke="#1c1c1c" stroke-width="1.5" fill="none"/><path d="M3.5 2.8 L10.5 1 V3.8 L3.5 5.6Z" fill="#1c1c1c"/><ellipse cx="2.4" cy="12" rx="2.4" ry="2" fill="#1c1c1c"/><ellipse cx="9.4" cy="10.3" rx="2.4" ry="2" fill="#1c1c1c"/></svg>
<div class="ab" style="left:139.2px;top:436px;width:2px;height:322.5px;background:#d0d0d0"></div>
</body></html>
